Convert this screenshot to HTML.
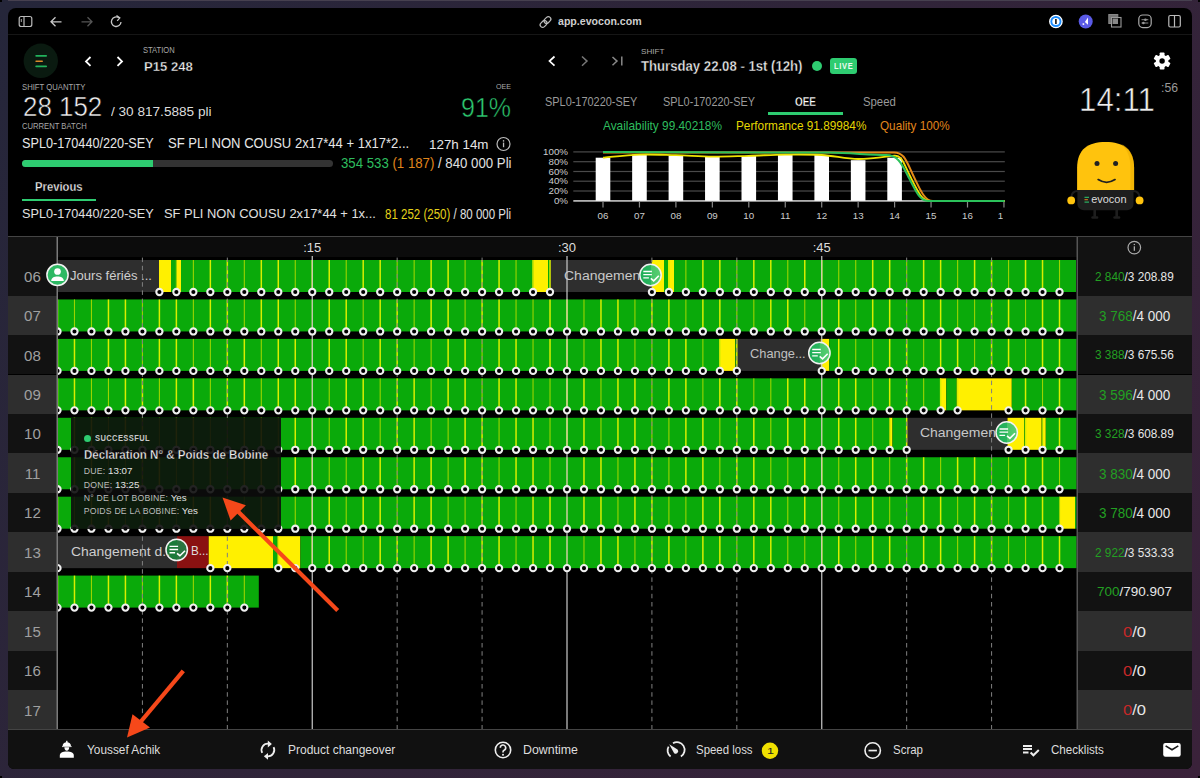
<!DOCTYPE html>
<html><head><meta charset="utf-8">
<style>
html,body{margin:0;padding:0;width:1200px;height:778px;overflow:hidden;background:#2a2a3c;font-family:"Liberation Sans", sans-serif;}
#frame{position:absolute;left:0;top:0;width:1200px;height:778px;background:linear-gradient(126deg,#25263a 0%,#302439 50%,#3a223a 100%);}
#win{position:absolute;left:8px;top:8px;width:1184px;height:761.3px;background:#000;border-radius:8px 8px 6px 6px;overflow:hidden;}
.t{position:absolute;white-space:nowrap;line-height:1;transform-origin:0 0;}
.abs{position:absolute;}
</style></head><body>
<div id="frame"></div>
<div id="win"></div>
<!-- toolbar line -->
<div class="abs" style="left:8px;top:34px;width:1184px;height:1px;background:#161616"></div>
<!-- progress bar -->
<div class="abs" style="left:21.5px;top:159.7px;width:311.3px;height:7px;border-radius:3.5px;background:#333"></div>
<div class="abs" style="left:21.5px;top:159.7px;width:131.9px;height:7px;border-radius:3.5px 0 0 3.5px;background:#2ecc71"></div>
<div class="abs" style="left:21.5px;top:198.7px;width:74.5px;height:2px;background:#2ecc71"></div>
<div class="abs" style="left:768px;top:112.3px;width:75px;height:2.5px;background:#2ecc71"></div>
<!-- LIVE badge -->
<div class="abs" style="left:830.4px;top:58.2px;width:27px;height:16px;border-radius:3px;background:#2ecc71"></div>
<div class="abs" style="left:812px;top:61.2px;width:10px;height:10px;border-radius:50%;background:#2ecc71"></div>
<!-- timeline frame -->
<div class="abs" style="left:8px;top:236px;width:1184px;height:1.3px;background:#444"></div>
<div id="labels"></div>
<div class="abs" style="left:8px;top:728.5px;width:1184px;height:40.8px;background:#111;border-top:1px solid #444;border-radius:0 0 6px 6px;box-sizing:border-box"></div>
<div class="abs" style="left:8px;top:0;width:1184px;height:1px;background:#46404f"></div>
<div class="abs" style="left:0;top:0;width:2px;height:2px;background:#000"></div><div class="abs" style="left:1198px;top:0;width:2px;height:2px;background:#000"></div><div class="abs" style="left:0;top:776px;width:2px;height:2px;background:#000"></div><div class="abs" style="left:1198px;top:776px;width:2px;height:2px;background:#000"></div>
<div class="abs" style="left:8px;top:237.3px;width:49px;height:58.3px;background:#121212"></div>
<div class="abs" style="left:1077px;top:237.3px;width:115px;height:58.3px;background:#121212"></div>
<div class="abs" style="left:8px;top:295.60px;width:49px;height:39.45px;background:#2e2e2e"></div>
<div class="abs" style="left:1077px;top:295.60px;width:115px;height:39.45px;background:#2e2e2e"></div>
<div class="abs" style="left:8px;top:335.05px;width:49px;height:39.45px;background:#121212"></div>
<div class="abs" style="left:1077px;top:335.05px;width:115px;height:39.45px;background:#121212"></div>
<div class="abs" style="left:8px;top:374.50px;width:49px;height:39.45px;background:#2e2e2e"></div>
<div class="abs" style="left:1077px;top:374.50px;width:115px;height:39.45px;background:#2e2e2e"></div>
<div class="abs" style="left:8px;top:413.95px;width:49px;height:39.45px;background:#121212"></div>
<div class="abs" style="left:1077px;top:413.95px;width:115px;height:39.45px;background:#121212"></div>
<div class="abs" style="left:8px;top:453.40px;width:49px;height:39.45px;background:#2e2e2e"></div>
<div class="abs" style="left:1077px;top:453.40px;width:115px;height:39.45px;background:#2e2e2e"></div>
<div class="abs" style="left:8px;top:492.85px;width:49px;height:39.45px;background:#121212"></div>
<div class="abs" style="left:1077px;top:492.85px;width:115px;height:39.45px;background:#121212"></div>
<div class="abs" style="left:8px;top:532.30px;width:49px;height:39.45px;background:#2e2e2e"></div>
<div class="abs" style="left:1077px;top:532.30px;width:115px;height:39.45px;background:#2e2e2e"></div>
<div class="abs" style="left:8px;top:571.75px;width:49px;height:39.45px;background:#121212"></div>
<div class="abs" style="left:1077px;top:571.75px;width:115px;height:39.45px;background:#121212"></div>
<div class="abs" style="left:8px;top:611.20px;width:49px;height:39.45px;background:#2e2e2e"></div>
<div class="abs" style="left:1077px;top:611.20px;width:115px;height:39.45px;background:#2e2e2e"></div>
<div class="abs" style="left:8px;top:650.65px;width:49px;height:39.45px;background:#121212"></div>
<div class="abs" style="left:1077px;top:650.65px;width:115px;height:39.45px;background:#121212"></div>
<div class="abs" style="left:8px;top:690.10px;width:49px;height:38.90px;background:#2e2e2e"></div>
<div class="abs" style="left:1077px;top:690.10px;width:115px;height:38.90px;background:#2e2e2e"></div>
<svg class="abs" style="left:0;top:0" width="1200" height="778" viewBox="0 0 1200 778">
<rect x="57" y="237" width="1020" height="20" fill="#0c0c0c"/>
<clipPath id="tlclip"><rect x="57.6" y="236" width="1019" height="493"/></clipPath><g clip-path="url(#tlclip)">
<rect x="57" y="260.0" width="102.00" height="32" fill="#2e2e2e"/>
<rect x="159" y="260.0" width="12.00" height="32" fill="#fff000"/>
<rect x="171" y="260.0" width="5.50" height="32" fill="#0aaa0a"/>
<rect x="176.5" y="260.0" width="4.50" height="32" fill="#fff000"/>
<rect x="181" y="260.0" width="352.30" height="32" fill="#0aaa0a"/>
<rect x="533.3" y="260.0" width="14.70" height="32" fill="#fff000"/>
<rect x="548" y="260.0" width="2.00" height="32" fill="#0aaa0a"/>
<rect x="550" y="260.0" width="101.70" height="32" fill="#2e2e2e"/>
<rect x="651.7" y="260.0" width="12.30" height="32" fill="#fff000"/>
<rect x="664" y="260.0" width="4.00" height="32" fill="#0aaa0a"/>
<rect x="668" y="260.0" width="6.00" height="32" fill="#fff000"/>
<rect x="674" y="260.0" width="402.00" height="32" fill="#0aaa0a"/>
<rect x="175.83" y="260.0" width="1.1" height="32" fill="#9ad400"/>
<rect x="192.82" y="260.0" width="1.1" height="32" fill="#9ad400"/>
<rect x="209.60" y="260.0" width="1.5" height="32" fill="#d8ee00"/>
<rect x="226.58" y="260.0" width="1.5" height="32" fill="#d8ee00"/>
<rect x="243.77" y="260.0" width="1.1" height="32" fill="#9ad400"/>
<rect x="260.55" y="260.0" width="1.5" height="32" fill="#d8ee00"/>
<rect x="277.53" y="260.0" width="1.5" height="32" fill="#d8ee00"/>
<rect x="294.72" y="260.0" width="1.1" height="32" fill="#9ad400"/>
<rect x="311.50" y="260.0" width="1.5" height="32" fill="#d8ee00"/>
<rect x="328.48" y="260.0" width="1.5" height="32" fill="#d8ee00"/>
<rect x="345.67" y="260.0" width="1.1" height="32" fill="#9ad400"/>
<rect x="362.45" y="260.0" width="1.5" height="32" fill="#d8ee00"/>
<rect x="379.43" y="260.0" width="1.5" height="32" fill="#d8ee00"/>
<rect x="396.62" y="260.0" width="1.1" height="32" fill="#9ad400"/>
<rect x="413.60" y="260.0" width="1.1" height="32" fill="#9ad400"/>
<rect x="430.38" y="260.0" width="1.5" height="32" fill="#d8ee00"/>
<rect x="447.37" y="260.0" width="1.5" height="32" fill="#d8ee00"/>
<rect x="464.55" y="260.0" width="1.1" height="32" fill="#9ad400"/>
<rect x="481.33" y="260.0" width="1.5" height="32" fill="#d8ee00"/>
<rect x="498.32" y="260.0" width="1.5" height="32" fill="#d8ee00"/>
<rect x="515.50" y="260.0" width="1.1" height="32" fill="#9ad400"/>
<rect x="532.28" y="260.0" width="1.5" height="32" fill="#d8ee00"/>
<rect x="549.27" y="260.0" width="1.5" height="32" fill="#d8ee00"/>
<rect x="668.15" y="260.0" width="1.5" height="32" fill="#d8ee00"/>
<rect x="685.33" y="260.0" width="1.1" height="32" fill="#9ad400"/>
<rect x="702.12" y="260.0" width="1.5" height="32" fill="#d8ee00"/>
<rect x="719.10" y="260.0" width="1.5" height="32" fill="#d8ee00"/>
<rect x="736.28" y="260.0" width="1.1" height="32" fill="#9ad400"/>
<rect x="753.07" y="260.0" width="1.5" height="32" fill="#d8ee00"/>
<rect x="770.05" y="260.0" width="1.5" height="32" fill="#d8ee00"/>
<rect x="787.23" y="260.0" width="1.1" height="32" fill="#9ad400"/>
<rect x="804.02" y="260.0" width="1.5" height="32" fill="#d8ee00"/>
<rect x="821.00" y="260.0" width="1.5" height="32" fill="#d8ee00"/>
<rect x="838.18" y="260.0" width="1.1" height="32" fill="#9ad400"/>
<rect x="855.17" y="260.0" width="1.1" height="32" fill="#9ad400"/>
<rect x="871.95" y="260.0" width="1.5" height="32" fill="#d8ee00"/>
<rect x="888.93" y="260.0" width="1.5" height="32" fill="#d8ee00"/>
<rect x="906.12" y="260.0" width="1.1" height="32" fill="#9ad400"/>
<rect x="922.90" y="260.0" width="1.5" height="32" fill="#d8ee00"/>
<rect x="939.88" y="260.0" width="1.5" height="32" fill="#d8ee00"/>
<rect x="957.07" y="260.0" width="1.1" height="32" fill="#9ad400"/>
<rect x="973.85" y="260.0" width="1.5" height="32" fill="#d8ee00"/>
<rect x="990.83" y="260.0" width="1.5" height="32" fill="#d8ee00"/>
<rect x="1008.02" y="260.0" width="1.1" height="32" fill="#9ad400"/>
<rect x="1024.80" y="260.0" width="1.5" height="32" fill="#d8ee00"/>
<rect x="1041.78" y="260.0" width="1.5" height="32" fill="#d8ee00"/>
<rect x="1058.97" y="260.0" width="1.1" height="32" fill="#9ad400"/>
<rect x="57" y="299.45" width="1020.00" height="32" fill="#0aaa0a"/>
<rect x="56.75" y="299.45" width="1.5" height="32" fill="#d8ee00"/>
<rect x="73.93" y="299.45" width="1.1" height="32" fill="#9ad400"/>
<rect x="90.92" y="299.45" width="1.1" height="32" fill="#9ad400"/>
<rect x="107.70" y="299.45" width="1.5" height="32" fill="#d8ee00"/>
<rect x="124.68" y="299.45" width="1.5" height="32" fill="#d8ee00"/>
<rect x="141.87" y="299.45" width="1.1" height="32" fill="#9ad400"/>
<rect x="158.65" y="299.45" width="1.5" height="32" fill="#d8ee00"/>
<rect x="175.63" y="299.45" width="1.5" height="32" fill="#d8ee00"/>
<rect x="192.82" y="299.45" width="1.1" height="32" fill="#9ad400"/>
<rect x="209.60" y="299.45" width="1.5" height="32" fill="#d8ee00"/>
<rect x="226.58" y="299.45" width="1.5" height="32" fill="#d8ee00"/>
<rect x="243.77" y="299.45" width="1.1" height="32" fill="#9ad400"/>
<rect x="260.55" y="299.45" width="1.5" height="32" fill="#d8ee00"/>
<rect x="277.53" y="299.45" width="1.5" height="32" fill="#d8ee00"/>
<rect x="294.72" y="299.45" width="1.1" height="32" fill="#9ad400"/>
<rect x="311.70" y="299.45" width="1.1" height="32" fill="#9ad400"/>
<rect x="328.48" y="299.45" width="1.5" height="32" fill="#d8ee00"/>
<rect x="345.47" y="299.45" width="1.5" height="32" fill="#d8ee00"/>
<rect x="362.65" y="299.45" width="1.1" height="32" fill="#9ad400"/>
<rect x="379.43" y="299.45" width="1.5" height="32" fill="#d8ee00"/>
<rect x="396.42" y="299.45" width="1.5" height="32" fill="#d8ee00"/>
<rect x="413.60" y="299.45" width="1.1" height="32" fill="#9ad400"/>
<rect x="430.38" y="299.45" width="1.5" height="32" fill="#d8ee00"/>
<rect x="447.37" y="299.45" width="1.5" height="32" fill="#d8ee00"/>
<rect x="464.55" y="299.45" width="1.1" height="32" fill="#9ad400"/>
<rect x="481.33" y="299.45" width="1.5" height="32" fill="#d8ee00"/>
<rect x="498.32" y="299.45" width="1.5" height="32" fill="#d8ee00"/>
<rect x="515.50" y="299.45" width="1.1" height="32" fill="#9ad400"/>
<rect x="532.48" y="299.45" width="1.1" height="32" fill="#9ad400"/>
<rect x="549.27" y="299.45" width="1.5" height="32" fill="#d8ee00"/>
<rect x="566.25" y="299.45" width="1.5" height="32" fill="#d8ee00"/>
<rect x="583.43" y="299.45" width="1.1" height="32" fill="#9ad400"/>
<rect x="600.22" y="299.45" width="1.5" height="32" fill="#d8ee00"/>
<rect x="617.20" y="299.45" width="1.5" height="32" fill="#d8ee00"/>
<rect x="634.38" y="299.45" width="1.1" height="32" fill="#9ad400"/>
<rect x="651.17" y="299.45" width="1.5" height="32" fill="#d8ee00"/>
<rect x="668.15" y="299.45" width="1.5" height="32" fill="#d8ee00"/>
<rect x="685.33" y="299.45" width="1.1" height="32" fill="#9ad400"/>
<rect x="702.12" y="299.45" width="1.5" height="32" fill="#d8ee00"/>
<rect x="719.10" y="299.45" width="1.5" height="32" fill="#d8ee00"/>
<rect x="736.28" y="299.45" width="1.1" height="32" fill="#9ad400"/>
<rect x="753.27" y="299.45" width="1.1" height="32" fill="#9ad400"/>
<rect x="770.05" y="299.45" width="1.5" height="32" fill="#d8ee00"/>
<rect x="787.03" y="299.45" width="1.5" height="32" fill="#d8ee00"/>
<rect x="804.22" y="299.45" width="1.1" height="32" fill="#9ad400"/>
<rect x="821.00" y="299.45" width="1.5" height="32" fill="#d8ee00"/>
<rect x="837.98" y="299.45" width="1.5" height="32" fill="#d8ee00"/>
<rect x="855.17" y="299.45" width="1.1" height="32" fill="#9ad400"/>
<rect x="871.95" y="299.45" width="1.5" height="32" fill="#d8ee00"/>
<rect x="888.93" y="299.45" width="1.5" height="32" fill="#d8ee00"/>
<rect x="906.12" y="299.45" width="1.1" height="32" fill="#9ad400"/>
<rect x="922.90" y="299.45" width="1.5" height="32" fill="#d8ee00"/>
<rect x="939.88" y="299.45" width="1.5" height="32" fill="#d8ee00"/>
<rect x="957.07" y="299.45" width="1.1" height="32" fill="#9ad400"/>
<rect x="974.05" y="299.45" width="1.1" height="32" fill="#9ad400"/>
<rect x="990.83" y="299.45" width="1.5" height="32" fill="#d8ee00"/>
<rect x="1007.82" y="299.45" width="1.5" height="32" fill="#d8ee00"/>
<rect x="1025.00" y="299.45" width="1.1" height="32" fill="#9ad400"/>
<rect x="1041.78" y="299.45" width="1.5" height="32" fill="#d8ee00"/>
<rect x="1058.77" y="299.45" width="1.5" height="32" fill="#d8ee00"/>
<rect x="57" y="338.9" width="663.00" height="32" fill="#0aaa0a"/>
<rect x="720" y="338.9" width="15.30" height="32" fill="#fff000"/>
<rect x="735.3" y="338.9" width="2.00" height="32" fill="#0aaa0a"/>
<rect x="737.3" y="338.9" width="83.40" height="32" fill="#2e2e2e"/>
<rect x="820.7" y="338.9" width="8.60" height="32" fill="#fff000"/>
<rect x="829.3" y="338.9" width="247.70" height="32" fill="#0aaa0a"/>
<rect x="56.75" y="338.9" width="1.5" height="32" fill="#d8ee00"/>
<rect x="73.73" y="338.9" width="1.5" height="32" fill="#d8ee00"/>
<rect x="90.92" y="338.9" width="1.1" height="32" fill="#9ad400"/>
<rect x="107.70" y="338.9" width="1.5" height="32" fill="#d8ee00"/>
<rect x="124.68" y="338.9" width="1.5" height="32" fill="#d8ee00"/>
<rect x="141.87" y="338.9" width="1.1" height="32" fill="#9ad400"/>
<rect x="158.65" y="338.9" width="1.5" height="32" fill="#d8ee00"/>
<rect x="175.63" y="338.9" width="1.5" height="32" fill="#d8ee00"/>
<rect x="192.82" y="338.9" width="1.1" height="32" fill="#9ad400"/>
<rect x="209.80" y="338.9" width="1.1" height="32" fill="#9ad400"/>
<rect x="226.58" y="338.9" width="1.5" height="32" fill="#d8ee00"/>
<rect x="243.57" y="338.9" width="1.5" height="32" fill="#d8ee00"/>
<rect x="260.75" y="338.9" width="1.1" height="32" fill="#9ad400"/>
<rect x="277.53" y="338.9" width="1.5" height="32" fill="#d8ee00"/>
<rect x="294.52" y="338.9" width="1.5" height="32" fill="#d8ee00"/>
<rect x="311.70" y="338.9" width="1.1" height="32" fill="#9ad400"/>
<rect x="328.48" y="338.9" width="1.5" height="32" fill="#d8ee00"/>
<rect x="345.47" y="338.9" width="1.5" height="32" fill="#d8ee00"/>
<rect x="362.65" y="338.9" width="1.1" height="32" fill="#9ad400"/>
<rect x="379.43" y="338.9" width="1.5" height="32" fill="#d8ee00"/>
<rect x="396.42" y="338.9" width="1.5" height="32" fill="#d8ee00"/>
<rect x="413.60" y="338.9" width="1.1" height="32" fill="#9ad400"/>
<rect x="430.58" y="338.9" width="1.1" height="32" fill="#9ad400"/>
<rect x="447.37" y="338.9" width="1.5" height="32" fill="#d8ee00"/>
<rect x="464.35" y="338.9" width="1.5" height="32" fill="#d8ee00"/>
<rect x="481.53" y="338.9" width="1.1" height="32" fill="#9ad400"/>
<rect x="498.32" y="338.9" width="1.5" height="32" fill="#d8ee00"/>
<rect x="515.30" y="338.9" width="1.5" height="32" fill="#d8ee00"/>
<rect x="532.48" y="338.9" width="1.1" height="32" fill="#9ad400"/>
<rect x="549.27" y="338.9" width="1.5" height="32" fill="#d8ee00"/>
<rect x="566.25" y="338.9" width="1.5" height="32" fill="#d8ee00"/>
<rect x="583.43" y="338.9" width="1.1" height="32" fill="#9ad400"/>
<rect x="600.22" y="338.9" width="1.5" height="32" fill="#d8ee00"/>
<rect x="617.20" y="338.9" width="1.5" height="32" fill="#d8ee00"/>
<rect x="634.38" y="338.9" width="1.1" height="32" fill="#9ad400"/>
<rect x="651.37" y="338.9" width="1.1" height="32" fill="#9ad400"/>
<rect x="668.15" y="338.9" width="1.5" height="32" fill="#d8ee00"/>
<rect x="685.13" y="338.9" width="1.5" height="32" fill="#d8ee00"/>
<rect x="702.32" y="338.9" width="1.1" height="32" fill="#9ad400"/>
<rect x="719.10" y="338.9" width="1.5" height="32" fill="#d8ee00"/>
<rect x="736.08" y="338.9" width="1.5" height="32" fill="#d8ee00"/>
<rect x="837.98" y="338.9" width="1.5" height="32" fill="#d8ee00"/>
<rect x="855.17" y="338.9" width="1.1" height="32" fill="#9ad400"/>
<rect x="872.15" y="338.9" width="1.1" height="32" fill="#9ad400"/>
<rect x="888.93" y="338.9" width="1.5" height="32" fill="#d8ee00"/>
<rect x="905.92" y="338.9" width="1.5" height="32" fill="#d8ee00"/>
<rect x="923.10" y="338.9" width="1.1" height="32" fill="#9ad400"/>
<rect x="939.88" y="338.9" width="1.5" height="32" fill="#d8ee00"/>
<rect x="956.87" y="338.9" width="1.5" height="32" fill="#d8ee00"/>
<rect x="974.05" y="338.9" width="1.1" height="32" fill="#9ad400"/>
<rect x="990.83" y="338.9" width="1.5" height="32" fill="#d8ee00"/>
<rect x="1007.82" y="338.9" width="1.5" height="32" fill="#d8ee00"/>
<rect x="1025.00" y="338.9" width="1.1" height="32" fill="#9ad400"/>
<rect x="1041.78" y="338.9" width="1.5" height="32" fill="#d8ee00"/>
<rect x="1058.77" y="338.9" width="1.5" height="32" fill="#d8ee00"/>
<rect x="57" y="378.35" width="883.00" height="32" fill="#0aaa0a"/>
<rect x="940" y="378.35" width="6.30" height="32" fill="#fff000"/>
<rect x="946.3" y="378.35" width="10.50" height="32" fill="#0aaa0a"/>
<rect x="956.8" y="378.35" width="55.00" height="32" fill="#fff000"/>
<rect x="1011.8" y="378.35" width="65.20" height="32" fill="#0aaa0a"/>
<rect x="56.75" y="378.35" width="1.5" height="32" fill="#d8ee00"/>
<rect x="73.73" y="378.35" width="1.5" height="32" fill="#d8ee00"/>
<rect x="90.92" y="378.35" width="1.1" height="32" fill="#9ad400"/>
<rect x="107.90" y="378.35" width="1.1" height="32" fill="#9ad400"/>
<rect x="124.68" y="378.35" width="1.5" height="32" fill="#d8ee00"/>
<rect x="141.67" y="378.35" width="1.5" height="32" fill="#d8ee00"/>
<rect x="158.85" y="378.35" width="1.1" height="32" fill="#9ad400"/>
<rect x="175.63" y="378.35" width="1.5" height="32" fill="#d8ee00"/>
<rect x="192.62" y="378.35" width="1.5" height="32" fill="#d8ee00"/>
<rect x="209.80" y="378.35" width="1.1" height="32" fill="#9ad400"/>
<rect x="226.58" y="378.35" width="1.5" height="32" fill="#d8ee00"/>
<rect x="243.57" y="378.35" width="1.5" height="32" fill="#d8ee00"/>
<rect x="260.75" y="378.35" width="1.1" height="32" fill="#9ad400"/>
<rect x="277.53" y="378.35" width="1.5" height="32" fill="#d8ee00"/>
<rect x="294.52" y="378.35" width="1.5" height="32" fill="#d8ee00"/>
<rect x="311.70" y="378.35" width="1.1" height="32" fill="#9ad400"/>
<rect x="328.68" y="378.35" width="1.1" height="32" fill="#9ad400"/>
<rect x="345.47" y="378.35" width="1.5" height="32" fill="#d8ee00"/>
<rect x="362.45" y="378.35" width="1.5" height="32" fill="#d8ee00"/>
<rect x="379.63" y="378.35" width="1.1" height="32" fill="#9ad400"/>
<rect x="396.42" y="378.35" width="1.5" height="32" fill="#d8ee00"/>
<rect x="413.40" y="378.35" width="1.5" height="32" fill="#d8ee00"/>
<rect x="430.58" y="378.35" width="1.1" height="32" fill="#9ad400"/>
<rect x="447.37" y="378.35" width="1.5" height="32" fill="#d8ee00"/>
<rect x="464.35" y="378.35" width="1.5" height="32" fill="#d8ee00"/>
<rect x="481.53" y="378.35" width="1.1" height="32" fill="#9ad400"/>
<rect x="498.32" y="378.35" width="1.5" height="32" fill="#d8ee00"/>
<rect x="515.30" y="378.35" width="1.5" height="32" fill="#d8ee00"/>
<rect x="532.48" y="378.35" width="1.1" height="32" fill="#9ad400"/>
<rect x="549.47" y="378.35" width="1.1" height="32" fill="#9ad400"/>
<rect x="566.25" y="378.35" width="1.5" height="32" fill="#d8ee00"/>
<rect x="583.23" y="378.35" width="1.5" height="32" fill="#d8ee00"/>
<rect x="600.42" y="378.35" width="1.1" height="32" fill="#9ad400"/>
<rect x="617.20" y="378.35" width="1.5" height="32" fill="#d8ee00"/>
<rect x="634.18" y="378.35" width="1.5" height="32" fill="#d8ee00"/>
<rect x="651.37" y="378.35" width="1.1" height="32" fill="#9ad400"/>
<rect x="668.15" y="378.35" width="1.5" height="32" fill="#d8ee00"/>
<rect x="685.13" y="378.35" width="1.5" height="32" fill="#d8ee00"/>
<rect x="702.32" y="378.35" width="1.1" height="32" fill="#9ad400"/>
<rect x="719.10" y="378.35" width="1.5" height="32" fill="#d8ee00"/>
<rect x="736.08" y="378.35" width="1.5" height="32" fill="#d8ee00"/>
<rect x="753.27" y="378.35" width="1.1" height="32" fill="#9ad400"/>
<rect x="770.25" y="378.35" width="1.1" height="32" fill="#9ad400"/>
<rect x="787.03" y="378.35" width="1.5" height="32" fill="#d8ee00"/>
<rect x="804.02" y="378.35" width="1.5" height="32" fill="#d8ee00"/>
<rect x="821.20" y="378.35" width="1.1" height="32" fill="#9ad400"/>
<rect x="837.98" y="378.35" width="1.5" height="32" fill="#d8ee00"/>
<rect x="854.97" y="378.35" width="1.5" height="32" fill="#d8ee00"/>
<rect x="872.15" y="378.35" width="1.1" height="32" fill="#9ad400"/>
<rect x="888.93" y="378.35" width="1.5" height="32" fill="#d8ee00"/>
<rect x="905.92" y="378.35" width="1.5" height="32" fill="#d8ee00"/>
<rect x="923.10" y="378.35" width="1.1" height="32" fill="#9ad400"/>
<rect x="939.88" y="378.35" width="1.5" height="32" fill="#d8ee00"/>
<rect x="956.87" y="378.35" width="1.5" height="32" fill="#d8ee00"/>
<rect x="1024.80" y="378.35" width="1.5" height="32" fill="#d8ee00"/>
<rect x="1041.98" y="378.35" width="1.1" height="32" fill="#9ad400"/>
<rect x="1058.77" y="378.35" width="1.5" height="32" fill="#d8ee00"/>
<rect x="57" y="417.8" width="832.20" height="32" fill="#0aaa0a"/>
<rect x="889.2" y="417.8" width="3.30" height="32" fill="#fff000"/>
<rect x="892.5" y="417.8" width="14.50" height="32" fill="#0aaa0a"/>
<rect x="907" y="417.8" width="100.50" height="32" fill="#2e2e2e"/>
<rect x="1007.5" y="417.8" width="16.70" height="32" fill="#fff000"/>
<rect x="1024.2" y="417.8" width="1.80" height="32" fill="#0aaa0a"/>
<rect x="1026" y="417.8" width="15.70" height="32" fill="#fff000"/>
<rect x="1041.7" y="417.8" width="1.30" height="32" fill="#0aaa0a"/>
<rect x="1043" y="417.8" width="2.80" height="32" fill="#fff000"/>
<rect x="1045.8" y="417.8" width="31.20" height="32" fill="#0aaa0a"/>
<rect x="56.95" y="417.8" width="1.1" height="32" fill="#9ad400"/>
<rect x="73.73" y="417.8" width="1.5" height="32" fill="#d8ee00"/>
<rect x="90.72" y="417.8" width="1.5" height="32" fill="#d8ee00"/>
<rect x="107.90" y="417.8" width="1.1" height="32" fill="#9ad400"/>
<rect x="124.68" y="417.8" width="1.5" height="32" fill="#d8ee00"/>
<rect x="141.67" y="417.8" width="1.5" height="32" fill="#d8ee00"/>
<rect x="158.85" y="417.8" width="1.1" height="32" fill="#9ad400"/>
<rect x="175.63" y="417.8" width="1.5" height="32" fill="#d8ee00"/>
<rect x="192.62" y="417.8" width="1.5" height="32" fill="#d8ee00"/>
<rect x="209.80" y="417.8" width="1.1" height="32" fill="#9ad400"/>
<rect x="226.78" y="417.8" width="1.1" height="32" fill="#9ad400"/>
<rect x="243.57" y="417.8" width="1.5" height="32" fill="#d8ee00"/>
<rect x="260.55" y="417.8" width="1.5" height="32" fill="#d8ee00"/>
<rect x="277.73" y="417.8" width="1.1" height="32" fill="#9ad400"/>
<rect x="294.52" y="417.8" width="1.5" height="32" fill="#d8ee00"/>
<rect x="311.50" y="417.8" width="1.5" height="32" fill="#d8ee00"/>
<rect x="328.68" y="417.8" width="1.1" height="32" fill="#9ad400"/>
<rect x="345.47" y="417.8" width="1.5" height="32" fill="#d8ee00"/>
<rect x="362.45" y="417.8" width="1.5" height="32" fill="#d8ee00"/>
<rect x="379.63" y="417.8" width="1.1" height="32" fill="#9ad400"/>
<rect x="396.42" y="417.8" width="1.5" height="32" fill="#d8ee00"/>
<rect x="413.40" y="417.8" width="1.5" height="32" fill="#d8ee00"/>
<rect x="430.58" y="417.8" width="1.1" height="32" fill="#9ad400"/>
<rect x="447.57" y="417.8" width="1.1" height="32" fill="#9ad400"/>
<rect x="464.35" y="417.8" width="1.5" height="32" fill="#d8ee00"/>
<rect x="481.33" y="417.8" width="1.5" height="32" fill="#d8ee00"/>
<rect x="498.52" y="417.8" width="1.1" height="32" fill="#9ad400"/>
<rect x="515.30" y="417.8" width="1.5" height="32" fill="#d8ee00"/>
<rect x="532.28" y="417.8" width="1.5" height="32" fill="#d8ee00"/>
<rect x="549.47" y="417.8" width="1.1" height="32" fill="#9ad400"/>
<rect x="566.25" y="417.8" width="1.5" height="32" fill="#d8ee00"/>
<rect x="583.23" y="417.8" width="1.5" height="32" fill="#d8ee00"/>
<rect x="600.42" y="417.8" width="1.1" height="32" fill="#9ad400"/>
<rect x="617.20" y="417.8" width="1.5" height="32" fill="#d8ee00"/>
<rect x="634.18" y="417.8" width="1.5" height="32" fill="#d8ee00"/>
<rect x="651.37" y="417.8" width="1.1" height="32" fill="#9ad400"/>
<rect x="668.35" y="417.8" width="1.1" height="32" fill="#9ad400"/>
<rect x="685.13" y="417.8" width="1.5" height="32" fill="#d8ee00"/>
<rect x="702.12" y="417.8" width="1.5" height="32" fill="#d8ee00"/>
<rect x="719.30" y="417.8" width="1.1" height="32" fill="#9ad400"/>
<rect x="736.08" y="417.8" width="1.5" height="32" fill="#d8ee00"/>
<rect x="753.07" y="417.8" width="1.5" height="32" fill="#d8ee00"/>
<rect x="770.25" y="417.8" width="1.1" height="32" fill="#9ad400"/>
<rect x="787.03" y="417.8" width="1.5" height="32" fill="#d8ee00"/>
<rect x="804.02" y="417.8" width="1.5" height="32" fill="#d8ee00"/>
<rect x="821.20" y="417.8" width="1.1" height="32" fill="#9ad400"/>
<rect x="837.98" y="417.8" width="1.5" height="32" fill="#d8ee00"/>
<rect x="854.97" y="417.8" width="1.5" height="32" fill="#d8ee00"/>
<rect x="872.15" y="417.8" width="1.1" height="32" fill="#9ad400"/>
<rect x="889.13" y="417.8" width="1.1" height="32" fill="#9ad400"/>
<rect x="905.92" y="417.8" width="1.5" height="32" fill="#d8ee00"/>
<rect x="1024.80" y="417.8" width="1.5" height="32" fill="#d8ee00"/>
<rect x="1041.98" y="417.8" width="1.1" height="32" fill="#9ad400"/>
<rect x="1058.77" y="417.8" width="1.5" height="32" fill="#d8ee00"/>
<rect x="57" y="457.25" width="1020.00" height="32" fill="#0aaa0a"/>
<rect x="56.95" y="457.25" width="1.1" height="32" fill="#9ad400"/>
<rect x="73.73" y="457.25" width="1.5" height="32" fill="#d8ee00"/>
<rect x="90.72" y="457.25" width="1.5" height="32" fill="#d8ee00"/>
<rect x="107.90" y="457.25" width="1.1" height="32" fill="#9ad400"/>
<rect x="124.88" y="457.25" width="1.1" height="32" fill="#9ad400"/>
<rect x="141.67" y="457.25" width="1.5" height="32" fill="#d8ee00"/>
<rect x="158.65" y="457.25" width="1.5" height="32" fill="#d8ee00"/>
<rect x="175.83" y="457.25" width="1.1" height="32" fill="#9ad400"/>
<rect x="192.62" y="457.25" width="1.5" height="32" fill="#d8ee00"/>
<rect x="209.60" y="457.25" width="1.5" height="32" fill="#d8ee00"/>
<rect x="226.78" y="457.25" width="1.1" height="32" fill="#9ad400"/>
<rect x="243.57" y="457.25" width="1.5" height="32" fill="#d8ee00"/>
<rect x="260.55" y="457.25" width="1.5" height="32" fill="#d8ee00"/>
<rect x="277.73" y="457.25" width="1.1" height="32" fill="#9ad400"/>
<rect x="294.52" y="457.25" width="1.5" height="32" fill="#d8ee00"/>
<rect x="311.50" y="457.25" width="1.5" height="32" fill="#d8ee00"/>
<rect x="328.68" y="457.25" width="1.1" height="32" fill="#9ad400"/>
<rect x="345.67" y="457.25" width="1.1" height="32" fill="#9ad400"/>
<rect x="362.45" y="457.25" width="1.5" height="32" fill="#d8ee00"/>
<rect x="379.43" y="457.25" width="1.5" height="32" fill="#d8ee00"/>
<rect x="396.62" y="457.25" width="1.1" height="32" fill="#9ad400"/>
<rect x="413.40" y="457.25" width="1.5" height="32" fill="#d8ee00"/>
<rect x="430.38" y="457.25" width="1.5" height="32" fill="#d8ee00"/>
<rect x="447.57" y="457.25" width="1.1" height="32" fill="#9ad400"/>
<rect x="464.35" y="457.25" width="1.5" height="32" fill="#d8ee00"/>
<rect x="481.33" y="457.25" width="1.5" height="32" fill="#d8ee00"/>
<rect x="498.52" y="457.25" width="1.1" height="32" fill="#9ad400"/>
<rect x="515.30" y="457.25" width="1.5" height="32" fill="#d8ee00"/>
<rect x="532.28" y="457.25" width="1.5" height="32" fill="#d8ee00"/>
<rect x="549.47" y="457.25" width="1.1" height="32" fill="#9ad400"/>
<rect x="566.45" y="457.25" width="1.1" height="32" fill="#9ad400"/>
<rect x="583.23" y="457.25" width="1.5" height="32" fill="#d8ee00"/>
<rect x="600.22" y="457.25" width="1.5" height="32" fill="#d8ee00"/>
<rect x="617.40" y="457.25" width="1.1" height="32" fill="#9ad400"/>
<rect x="634.18" y="457.25" width="1.5" height="32" fill="#d8ee00"/>
<rect x="651.17" y="457.25" width="1.5" height="32" fill="#d8ee00"/>
<rect x="668.35" y="457.25" width="1.1" height="32" fill="#9ad400"/>
<rect x="685.13" y="457.25" width="1.5" height="32" fill="#d8ee00"/>
<rect x="702.12" y="457.25" width="1.5" height="32" fill="#d8ee00"/>
<rect x="719.30" y="457.25" width="1.1" height="32" fill="#9ad400"/>
<rect x="736.08" y="457.25" width="1.5" height="32" fill="#d8ee00"/>
<rect x="753.07" y="457.25" width="1.5" height="32" fill="#d8ee00"/>
<rect x="770.25" y="457.25" width="1.1" height="32" fill="#9ad400"/>
<rect x="787.23" y="457.25" width="1.1" height="32" fill="#9ad400"/>
<rect x="804.02" y="457.25" width="1.5" height="32" fill="#d8ee00"/>
<rect x="821.00" y="457.25" width="1.5" height="32" fill="#d8ee00"/>
<rect x="838.18" y="457.25" width="1.1" height="32" fill="#9ad400"/>
<rect x="854.97" y="457.25" width="1.5" height="32" fill="#d8ee00"/>
<rect x="871.95" y="457.25" width="1.5" height="32" fill="#d8ee00"/>
<rect x="889.13" y="457.25" width="1.1" height="32" fill="#9ad400"/>
<rect x="905.92" y="457.25" width="1.5" height="32" fill="#d8ee00"/>
<rect x="922.90" y="457.25" width="1.5" height="32" fill="#d8ee00"/>
<rect x="940.08" y="457.25" width="1.1" height="32" fill="#9ad400"/>
<rect x="956.87" y="457.25" width="1.5" height="32" fill="#d8ee00"/>
<rect x="973.85" y="457.25" width="1.5" height="32" fill="#d8ee00"/>
<rect x="991.03" y="457.25" width="1.1" height="32" fill="#9ad400"/>
<rect x="1008.02" y="457.25" width="1.1" height="32" fill="#9ad400"/>
<rect x="1024.80" y="457.25" width="1.5" height="32" fill="#d8ee00"/>
<rect x="1041.78" y="457.25" width="1.5" height="32" fill="#d8ee00"/>
<rect x="1058.97" y="457.25" width="1.1" height="32" fill="#9ad400"/>
<rect x="57" y="496.70000000000005" width="1002.60" height="32" fill="#0aaa0a"/>
<rect x="1059.6" y="496.70000000000005" width="15.40" height="32" fill="#fff000"/>
<rect x="1075" y="496.70000000000005" width="2.00" height="32" fill="#0aaa0a"/>
<rect x="56.75" y="496.70000000000005" width="1.5" height="32" fill="#d8ee00"/>
<rect x="73.93" y="496.70000000000005" width="1.1" height="32" fill="#9ad400"/>
<rect x="90.72" y="496.70000000000005" width="1.5" height="32" fill="#d8ee00"/>
<rect x="107.70" y="496.70000000000005" width="1.5" height="32" fill="#d8ee00"/>
<rect x="124.88" y="496.70000000000005" width="1.1" height="32" fill="#9ad400"/>
<rect x="141.67" y="496.70000000000005" width="1.5" height="32" fill="#d8ee00"/>
<rect x="158.65" y="496.70000000000005" width="1.5" height="32" fill="#d8ee00"/>
<rect x="175.83" y="496.70000000000005" width="1.1" height="32" fill="#9ad400"/>
<rect x="192.62" y="496.70000000000005" width="1.5" height="32" fill="#d8ee00"/>
<rect x="209.60" y="496.70000000000005" width="1.5" height="32" fill="#d8ee00"/>
<rect x="226.78" y="496.70000000000005" width="1.1" height="32" fill="#9ad400"/>
<rect x="243.77" y="496.70000000000005" width="1.1" height="32" fill="#9ad400"/>
<rect x="260.55" y="496.70000000000005" width="1.5" height="32" fill="#d8ee00"/>
<rect x="277.53" y="496.70000000000005" width="1.5" height="32" fill="#d8ee00"/>
<rect x="294.72" y="496.70000000000005" width="1.1" height="32" fill="#9ad400"/>
<rect x="311.50" y="496.70000000000005" width="1.5" height="32" fill="#d8ee00"/>
<rect x="328.48" y="496.70000000000005" width="1.5" height="32" fill="#d8ee00"/>
<rect x="345.67" y="496.70000000000005" width="1.1" height="32" fill="#9ad400"/>
<rect x="362.45" y="496.70000000000005" width="1.5" height="32" fill="#d8ee00"/>
<rect x="379.43" y="496.70000000000005" width="1.5" height="32" fill="#d8ee00"/>
<rect x="396.62" y="496.70000000000005" width="1.1" height="32" fill="#9ad400"/>
<rect x="413.40" y="496.70000000000005" width="1.5" height="32" fill="#d8ee00"/>
<rect x="430.38" y="496.70000000000005" width="1.5" height="32" fill="#d8ee00"/>
<rect x="447.57" y="496.70000000000005" width="1.1" height="32" fill="#9ad400"/>
<rect x="464.55" y="496.70000000000005" width="1.1" height="32" fill="#9ad400"/>
<rect x="481.33" y="496.70000000000005" width="1.5" height="32" fill="#d8ee00"/>
<rect x="498.32" y="496.70000000000005" width="1.5" height="32" fill="#d8ee00"/>
<rect x="515.50" y="496.70000000000005" width="1.1" height="32" fill="#9ad400"/>
<rect x="532.28" y="496.70000000000005" width="1.5" height="32" fill="#d8ee00"/>
<rect x="549.27" y="496.70000000000005" width="1.5" height="32" fill="#d8ee00"/>
<rect x="566.45" y="496.70000000000005" width="1.1" height="32" fill="#9ad400"/>
<rect x="583.23" y="496.70000000000005" width="1.5" height="32" fill="#d8ee00"/>
<rect x="600.22" y="496.70000000000005" width="1.5" height="32" fill="#d8ee00"/>
<rect x="617.40" y="496.70000000000005" width="1.1" height="32" fill="#9ad400"/>
<rect x="634.18" y="496.70000000000005" width="1.5" height="32" fill="#d8ee00"/>
<rect x="651.17" y="496.70000000000005" width="1.5" height="32" fill="#d8ee00"/>
<rect x="668.35" y="496.70000000000005" width="1.1" height="32" fill="#9ad400"/>
<rect x="685.33" y="496.70000000000005" width="1.1" height="32" fill="#9ad400"/>
<rect x="702.12" y="496.70000000000005" width="1.5" height="32" fill="#d8ee00"/>
<rect x="719.10" y="496.70000000000005" width="1.5" height="32" fill="#d8ee00"/>
<rect x="736.28" y="496.70000000000005" width="1.1" height="32" fill="#9ad400"/>
<rect x="753.07" y="496.70000000000005" width="1.5" height="32" fill="#d8ee00"/>
<rect x="770.05" y="496.70000000000005" width="1.5" height="32" fill="#d8ee00"/>
<rect x="787.23" y="496.70000000000005" width="1.1" height="32" fill="#9ad400"/>
<rect x="804.02" y="496.70000000000005" width="1.5" height="32" fill="#d8ee00"/>
<rect x="821.00" y="496.70000000000005" width="1.5" height="32" fill="#d8ee00"/>
<rect x="838.18" y="496.70000000000005" width="1.1" height="32" fill="#9ad400"/>
<rect x="854.97" y="496.70000000000005" width="1.5" height="32" fill="#d8ee00"/>
<rect x="871.95" y="496.70000000000005" width="1.5" height="32" fill="#d8ee00"/>
<rect x="889.13" y="496.70000000000005" width="1.1" height="32" fill="#9ad400"/>
<rect x="906.12" y="496.70000000000005" width="1.1" height="32" fill="#9ad400"/>
<rect x="922.90" y="496.70000000000005" width="1.5" height="32" fill="#d8ee00"/>
<rect x="939.88" y="496.70000000000005" width="1.5" height="32" fill="#d8ee00"/>
<rect x="957.07" y="496.70000000000005" width="1.1" height="32" fill="#9ad400"/>
<rect x="973.85" y="496.70000000000005" width="1.5" height="32" fill="#d8ee00"/>
<rect x="990.83" y="496.70000000000005" width="1.5" height="32" fill="#d8ee00"/>
<rect x="1008.02" y="496.70000000000005" width="1.1" height="32" fill="#9ad400"/>
<rect x="1024.80" y="496.70000000000005" width="1.5" height="32" fill="#d8ee00"/>
<rect x="1041.78" y="496.70000000000005" width="1.5" height="32" fill="#d8ee00"/>
<rect x="1058.97" y="496.70000000000005" width="1.1" height="32" fill="#9ad400"/>
<rect x="57" y="536.1500000000001" width="120.00" height="32" fill="#2e2e2e"/>
<rect x="177" y="536.1500000000001" width="31.70" height="32" fill="#8a1111"/>
<rect x="208.7" y="536.1500000000001" width="64.30" height="32" fill="#fff000"/>
<rect x="273" y="536.1500000000001" width="4.80" height="32" fill="#0aaa0a"/>
<rect x="277.8" y="536.1500000000001" width="22.60" height="32" fill="#fff000"/>
<rect x="300.4" y="536.1500000000001" width="776.60" height="32" fill="#0aaa0a"/>
<rect x="277.53" y="536.1500000000001" width="1.5" height="32" fill="#d8ee00"/>
<rect x="311.50" y="536.1500000000001" width="1.5" height="32" fill="#d8ee00"/>
<rect x="328.48" y="536.1500000000001" width="1.5" height="32" fill="#d8ee00"/>
<rect x="345.67" y="536.1500000000001" width="1.1" height="32" fill="#9ad400"/>
<rect x="362.65" y="536.1500000000001" width="1.1" height="32" fill="#9ad400"/>
<rect x="379.43" y="536.1500000000001" width="1.5" height="32" fill="#d8ee00"/>
<rect x="396.42" y="536.1500000000001" width="1.5" height="32" fill="#d8ee00"/>
<rect x="413.60" y="536.1500000000001" width="1.1" height="32" fill="#9ad400"/>
<rect x="430.38" y="536.1500000000001" width="1.5" height="32" fill="#d8ee00"/>
<rect x="447.37" y="536.1500000000001" width="1.5" height="32" fill="#d8ee00"/>
<rect x="464.55" y="536.1500000000001" width="1.1" height="32" fill="#9ad400"/>
<rect x="481.33" y="536.1500000000001" width="1.5" height="32" fill="#d8ee00"/>
<rect x="498.32" y="536.1500000000001" width="1.5" height="32" fill="#d8ee00"/>
<rect x="515.50" y="536.1500000000001" width="1.1" height="32" fill="#9ad400"/>
<rect x="532.28" y="536.1500000000001" width="1.5" height="32" fill="#d8ee00"/>
<rect x="549.27" y="536.1500000000001" width="1.5" height="32" fill="#d8ee00"/>
<rect x="566.45" y="536.1500000000001" width="1.1" height="32" fill="#9ad400"/>
<rect x="583.43" y="536.1500000000001" width="1.1" height="32" fill="#9ad400"/>
<rect x="600.22" y="536.1500000000001" width="1.5" height="32" fill="#d8ee00"/>
<rect x="617.20" y="536.1500000000001" width="1.5" height="32" fill="#d8ee00"/>
<rect x="634.38" y="536.1500000000001" width="1.1" height="32" fill="#9ad400"/>
<rect x="651.17" y="536.1500000000001" width="1.5" height="32" fill="#d8ee00"/>
<rect x="668.15" y="536.1500000000001" width="1.5" height="32" fill="#d8ee00"/>
<rect x="685.33" y="536.1500000000001" width="1.1" height="32" fill="#9ad400"/>
<rect x="702.12" y="536.1500000000001" width="1.5" height="32" fill="#d8ee00"/>
<rect x="719.10" y="536.1500000000001" width="1.5" height="32" fill="#d8ee00"/>
<rect x="736.28" y="536.1500000000001" width="1.1" height="32" fill="#9ad400"/>
<rect x="753.07" y="536.1500000000001" width="1.5" height="32" fill="#d8ee00"/>
<rect x="770.05" y="536.1500000000001" width="1.5" height="32" fill="#d8ee00"/>
<rect x="787.23" y="536.1500000000001" width="1.1" height="32" fill="#9ad400"/>
<rect x="804.22" y="536.1500000000001" width="1.1" height="32" fill="#9ad400"/>
<rect x="821.00" y="536.1500000000001" width="1.5" height="32" fill="#d8ee00"/>
<rect x="837.98" y="536.1500000000001" width="1.5" height="32" fill="#d8ee00"/>
<rect x="855.17" y="536.1500000000001" width="1.1" height="32" fill="#9ad400"/>
<rect x="871.95" y="536.1500000000001" width="1.5" height="32" fill="#d8ee00"/>
<rect x="888.93" y="536.1500000000001" width="1.5" height="32" fill="#d8ee00"/>
<rect x="906.12" y="536.1500000000001" width="1.1" height="32" fill="#9ad400"/>
<rect x="922.90" y="536.1500000000001" width="1.5" height="32" fill="#d8ee00"/>
<rect x="939.88" y="536.1500000000001" width="1.5" height="32" fill="#d8ee00"/>
<rect x="957.07" y="536.1500000000001" width="1.1" height="32" fill="#9ad400"/>
<rect x="973.85" y="536.1500000000001" width="1.5" height="32" fill="#d8ee00"/>
<rect x="990.83" y="536.1500000000001" width="1.5" height="32" fill="#d8ee00"/>
<rect x="1008.02" y="536.1500000000001" width="1.1" height="32" fill="#9ad400"/>
<rect x="1025.00" y="536.1500000000001" width="1.1" height="32" fill="#9ad400"/>
<rect x="1041.78" y="536.1500000000001" width="1.5" height="32" fill="#d8ee00"/>
<rect x="1058.77" y="536.1500000000001" width="1.5" height="32" fill="#d8ee00"/>
<rect x="57" y="575.6" width="201.80" height="32" fill="#0aaa0a"/>
<rect x="56.75" y="575.6" width="1.5" height="32" fill="#d8ee00"/>
<rect x="73.73" y="575.6" width="1.5" height="32" fill="#d8ee00"/>
<rect x="90.92" y="575.6" width="1.1" height="32" fill="#9ad400"/>
<rect x="107.70" y="575.6" width="1.5" height="32" fill="#d8ee00"/>
<rect x="124.68" y="575.6" width="1.5" height="32" fill="#d8ee00"/>
<rect x="141.87" y="575.6" width="1.1" height="32" fill="#9ad400"/>
<rect x="158.65" y="575.6" width="1.5" height="32" fill="#d8ee00"/>
<rect x="175.63" y="575.6" width="1.5" height="32" fill="#d8ee00"/>
<rect x="192.82" y="575.6" width="1.1" height="32" fill="#9ad400"/>
<rect x="209.60" y="575.6" width="1.5" height="32" fill="#d8ee00"/>
<rect x="226.58" y="575.6" width="1.5" height="32" fill="#d8ee00"/>
<rect x="243.77" y="575.6" width="1.1" height="32" fill="#9ad400"/>
<line x1="142.41666666666669" y1="257.6" x2="142.41666666666669" y2="729" stroke="#808080" stroke-width="1" stroke-dasharray="4.5,3.7"/>
<line x1="227.33333333333334" y1="257.6" x2="227.33333333333334" y2="729" stroke="#808080" stroke-width="1" stroke-dasharray="4.5,3.7"/>
<rect x="311.65" y="256" width="1.2" height="473" fill="#c8c8c8"/>
<line x1="397.1666666666667" y1="257.6" x2="397.1666666666667" y2="729" stroke="#808080" stroke-width="1" stroke-dasharray="4.5,3.7"/>
<line x1="482.08333333333337" y1="257.6" x2="482.08333333333337" y2="729" stroke="#808080" stroke-width="1" stroke-dasharray="4.5,3.7"/>
<rect x="566.40" y="256" width="1.2" height="473" fill="#c8c8c8"/>
<line x1="651.9166666666667" y1="257.6" x2="651.9166666666667" y2="729" stroke="#808080" stroke-width="1" stroke-dasharray="4.5,3.7"/>
<line x1="736.8333333333334" y1="257.6" x2="736.8333333333334" y2="729" stroke="#808080" stroke-width="1" stroke-dasharray="4.5,3.7"/>
<rect x="821.15" y="256" width="1.2" height="473" fill="#c8c8c8"/>
<line x1="906.6666666666667" y1="257.6" x2="906.6666666666667" y2="729" stroke="#808080" stroke-width="1" stroke-dasharray="4.5,3.7"/>
<line x1="991.5833333333334" y1="257.6" x2="991.5833333333334" y2="729" stroke="#808080" stroke-width="1" stroke-dasharray="4.5,3.7"/>
<circle cx="159.4" cy="292.00" r="3.1" fill="#000" stroke="#f0f0f0" stroke-width="2.1"/>
<circle cx="176.38333333333333" cy="292.00" r="3.1" fill="#000" stroke="#f0f0f0" stroke-width="2.1"/>
<circle cx="193.36666666666667" cy="292.00" r="3.1" fill="#000" stroke="#f0f0f0" stroke-width="2.1"/>
<circle cx="210.35000000000002" cy="292.00" r="3.1" fill="#000" stroke="#f0f0f0" stroke-width="2.1"/>
<circle cx="227.33333333333334" cy="292.00" r="3.1" fill="#000" stroke="#f0f0f0" stroke-width="2.1"/>
<circle cx="244.31666666666666" cy="292.00" r="3.1" fill="#000" stroke="#f0f0f0" stroke-width="2.1"/>
<circle cx="261.3" cy="292.00" r="3.1" fill="#000" stroke="#f0f0f0" stroke-width="2.1"/>
<circle cx="278.28333333333336" cy="292.00" r="3.1" fill="#000" stroke="#f0f0f0" stroke-width="2.1"/>
<circle cx="295.26666666666665" cy="292.00" r="3.1" fill="#000" stroke="#f0f0f0" stroke-width="2.1"/>
<circle cx="312.25" cy="292.00" r="3.1" fill="#000" stroke="#f0f0f0" stroke-width="2.1"/>
<circle cx="329.23333333333335" cy="292.00" r="3.1" fill="#000" stroke="#f0f0f0" stroke-width="2.1"/>
<circle cx="346.2166666666667" cy="292.00" r="3.1" fill="#000" stroke="#f0f0f0" stroke-width="2.1"/>
<circle cx="363.20000000000005" cy="292.00" r="3.1" fill="#000" stroke="#f0f0f0" stroke-width="2.1"/>
<circle cx="380.18333333333334" cy="292.00" r="3.1" fill="#000" stroke="#f0f0f0" stroke-width="2.1"/>
<circle cx="397.1666666666667" cy="292.00" r="3.1" fill="#000" stroke="#f0f0f0" stroke-width="2.1"/>
<circle cx="414.15000000000003" cy="292.00" r="3.1" fill="#000" stroke="#f0f0f0" stroke-width="2.1"/>
<circle cx="431.1333333333333" cy="292.00" r="3.1" fill="#000" stroke="#f0f0f0" stroke-width="2.1"/>
<circle cx="448.1166666666667" cy="292.00" r="3.1" fill="#000" stroke="#f0f0f0" stroke-width="2.1"/>
<circle cx="465.1" cy="292.00" r="3.1" fill="#000" stroke="#f0f0f0" stroke-width="2.1"/>
<circle cx="482.08333333333337" cy="292.00" r="3.1" fill="#000" stroke="#f0f0f0" stroke-width="2.1"/>
<circle cx="499.0666666666667" cy="292.00" r="3.1" fill="#000" stroke="#f0f0f0" stroke-width="2.1"/>
<circle cx="516.05" cy="292.00" r="3.1" fill="#000" stroke="#f0f0f0" stroke-width="2.1"/>
<circle cx="533.0333333333333" cy="292.00" r="3.1" fill="#000" stroke="#f0f0f0" stroke-width="2.1"/>
<circle cx="550.0166666666667" cy="292.00" r="3.1" fill="#000" stroke="#f0f0f0" stroke-width="2.1"/>
<circle cx="651.9166666666667" cy="292.00" r="3.1" fill="#000" stroke="#f0f0f0" stroke-width="2.1"/>
<circle cx="668.9000000000001" cy="292.00" r="3.1" fill="#000" stroke="#f0f0f0" stroke-width="2.1"/>
<circle cx="685.8833333333333" cy="292.00" r="3.1" fill="#000" stroke="#f0f0f0" stroke-width="2.1"/>
<circle cx="702.8666666666667" cy="292.00" r="3.1" fill="#000" stroke="#f0f0f0" stroke-width="2.1"/>
<circle cx="719.85" cy="292.00" r="3.1" fill="#000" stroke="#f0f0f0" stroke-width="2.1"/>
<circle cx="736.8333333333334" cy="292.00" r="3.1" fill="#000" stroke="#f0f0f0" stroke-width="2.1"/>
<circle cx="753.8166666666667" cy="292.00" r="3.1" fill="#000" stroke="#f0f0f0" stroke-width="2.1"/>
<circle cx="770.8000000000001" cy="292.00" r="3.1" fill="#000" stroke="#f0f0f0" stroke-width="2.1"/>
<circle cx="787.7833333333334" cy="292.00" r="3.1" fill="#000" stroke="#f0f0f0" stroke-width="2.1"/>
<circle cx="804.7666666666667" cy="292.00" r="3.1" fill="#000" stroke="#f0f0f0" stroke-width="2.1"/>
<circle cx="821.75" cy="292.00" r="3.1" fill="#000" stroke="#f0f0f0" stroke-width="2.1"/>
<circle cx="838.7333333333333" cy="292.00" r="3.1" fill="#000" stroke="#f0f0f0" stroke-width="2.1"/>
<circle cx="855.7166666666667" cy="292.00" r="3.1" fill="#000" stroke="#f0f0f0" stroke-width="2.1"/>
<circle cx="872.7" cy="292.00" r="3.1" fill="#000" stroke="#f0f0f0" stroke-width="2.1"/>
<circle cx="889.6833333333334" cy="292.00" r="3.1" fill="#000" stroke="#f0f0f0" stroke-width="2.1"/>
<circle cx="906.6666666666667" cy="292.00" r="3.1" fill="#000" stroke="#f0f0f0" stroke-width="2.1"/>
<circle cx="923.6500000000001" cy="292.00" r="3.1" fill="#000" stroke="#f0f0f0" stroke-width="2.1"/>
<circle cx="940.6333333333334" cy="292.00" r="3.1" fill="#000" stroke="#f0f0f0" stroke-width="2.1"/>
<circle cx="957.6166666666667" cy="292.00" r="3.1" fill="#000" stroke="#f0f0f0" stroke-width="2.1"/>
<circle cx="974.6" cy="292.00" r="3.1" fill="#000" stroke="#f0f0f0" stroke-width="2.1"/>
<circle cx="991.5833333333334" cy="292.00" r="3.1" fill="#000" stroke="#f0f0f0" stroke-width="2.1"/>
<circle cx="1008.5666666666667" cy="292.00" r="3.1" fill="#000" stroke="#f0f0f0" stroke-width="2.1"/>
<circle cx="1025.5500000000002" cy="292.00" r="3.1" fill="#000" stroke="#f0f0f0" stroke-width="2.1"/>
<circle cx="1042.5333333333333" cy="292.00" r="3.1" fill="#000" stroke="#f0f0f0" stroke-width="2.1"/>
<circle cx="1059.5166666666669" cy="292.00" r="3.1" fill="#000" stroke="#f0f0f0" stroke-width="2.1"/>
<circle cx="57.5" cy="331.45" r="3.1" fill="#000" stroke="#f0f0f0" stroke-width="2.1"/>
<circle cx="74.48333333333333" cy="331.45" r="3.1" fill="#000" stroke="#f0f0f0" stroke-width="2.1"/>
<circle cx="91.46666666666667" cy="331.45" r="3.1" fill="#000" stroke="#f0f0f0" stroke-width="2.1"/>
<circle cx="108.45" cy="331.45" r="3.1" fill="#000" stroke="#f0f0f0" stroke-width="2.1"/>
<circle cx="125.43333333333334" cy="331.45" r="3.1" fill="#000" stroke="#f0f0f0" stroke-width="2.1"/>
<circle cx="142.41666666666669" cy="331.45" r="3.1" fill="#000" stroke="#f0f0f0" stroke-width="2.1"/>
<circle cx="159.4" cy="331.45" r="3.1" fill="#000" stroke="#f0f0f0" stroke-width="2.1"/>
<circle cx="176.38333333333333" cy="331.45" r="3.1" fill="#000" stroke="#f0f0f0" stroke-width="2.1"/>
<circle cx="193.36666666666667" cy="331.45" r="3.1" fill="#000" stroke="#f0f0f0" stroke-width="2.1"/>
<circle cx="210.35000000000002" cy="331.45" r="3.1" fill="#000" stroke="#f0f0f0" stroke-width="2.1"/>
<circle cx="227.33333333333334" cy="331.45" r="3.1" fill="#000" stroke="#f0f0f0" stroke-width="2.1"/>
<circle cx="244.31666666666666" cy="331.45" r="3.1" fill="#000" stroke="#f0f0f0" stroke-width="2.1"/>
<circle cx="261.3" cy="331.45" r="3.1" fill="#000" stroke="#f0f0f0" stroke-width="2.1"/>
<circle cx="278.28333333333336" cy="331.45" r="3.1" fill="#000" stroke="#f0f0f0" stroke-width="2.1"/>
<circle cx="295.26666666666665" cy="331.45" r="3.1" fill="#000" stroke="#f0f0f0" stroke-width="2.1"/>
<circle cx="312.25" cy="331.45" r="3.1" fill="#000" stroke="#f0f0f0" stroke-width="2.1"/>
<circle cx="329.23333333333335" cy="331.45" r="3.1" fill="#000" stroke="#f0f0f0" stroke-width="2.1"/>
<circle cx="346.2166666666667" cy="331.45" r="3.1" fill="#000" stroke="#f0f0f0" stroke-width="2.1"/>
<circle cx="363.20000000000005" cy="331.45" r="3.1" fill="#000" stroke="#f0f0f0" stroke-width="2.1"/>
<circle cx="380.18333333333334" cy="331.45" r="3.1" fill="#000" stroke="#f0f0f0" stroke-width="2.1"/>
<circle cx="397.1666666666667" cy="331.45" r="3.1" fill="#000" stroke="#f0f0f0" stroke-width="2.1"/>
<circle cx="414.15000000000003" cy="331.45" r="3.1" fill="#000" stroke="#f0f0f0" stroke-width="2.1"/>
<circle cx="431.1333333333333" cy="331.45" r="3.1" fill="#000" stroke="#f0f0f0" stroke-width="2.1"/>
<circle cx="448.1166666666667" cy="331.45" r="3.1" fill="#000" stroke="#f0f0f0" stroke-width="2.1"/>
<circle cx="465.1" cy="331.45" r="3.1" fill="#000" stroke="#f0f0f0" stroke-width="2.1"/>
<circle cx="482.08333333333337" cy="331.45" r="3.1" fill="#000" stroke="#f0f0f0" stroke-width="2.1"/>
<circle cx="499.0666666666667" cy="331.45" r="3.1" fill="#000" stroke="#f0f0f0" stroke-width="2.1"/>
<circle cx="516.05" cy="331.45" r="3.1" fill="#000" stroke="#f0f0f0" stroke-width="2.1"/>
<circle cx="533.0333333333333" cy="331.45" r="3.1" fill="#000" stroke="#f0f0f0" stroke-width="2.1"/>
<circle cx="550.0166666666667" cy="331.45" r="3.1" fill="#000" stroke="#f0f0f0" stroke-width="2.1"/>
<circle cx="567.0" cy="331.45" r="3.1" fill="#000" stroke="#f0f0f0" stroke-width="2.1"/>
<circle cx="583.9833333333333" cy="331.45" r="3.1" fill="#000" stroke="#f0f0f0" stroke-width="2.1"/>
<circle cx="600.9666666666667" cy="331.45" r="3.1" fill="#000" stroke="#f0f0f0" stroke-width="2.1"/>
<circle cx="617.95" cy="331.45" r="3.1" fill="#000" stroke="#f0f0f0" stroke-width="2.1"/>
<circle cx="634.9333333333334" cy="331.45" r="3.1" fill="#000" stroke="#f0f0f0" stroke-width="2.1"/>
<circle cx="651.9166666666667" cy="331.45" r="3.1" fill="#000" stroke="#f0f0f0" stroke-width="2.1"/>
<circle cx="668.9000000000001" cy="331.45" r="3.1" fill="#000" stroke="#f0f0f0" stroke-width="2.1"/>
<circle cx="685.8833333333333" cy="331.45" r="3.1" fill="#000" stroke="#f0f0f0" stroke-width="2.1"/>
<circle cx="702.8666666666667" cy="331.45" r="3.1" fill="#000" stroke="#f0f0f0" stroke-width="2.1"/>
<circle cx="719.85" cy="331.45" r="3.1" fill="#000" stroke="#f0f0f0" stroke-width="2.1"/>
<circle cx="736.8333333333334" cy="331.45" r="3.1" fill="#000" stroke="#f0f0f0" stroke-width="2.1"/>
<circle cx="753.8166666666667" cy="331.45" r="3.1" fill="#000" stroke="#f0f0f0" stroke-width="2.1"/>
<circle cx="770.8000000000001" cy="331.45" r="3.1" fill="#000" stroke="#f0f0f0" stroke-width="2.1"/>
<circle cx="787.7833333333334" cy="331.45" r="3.1" fill="#000" stroke="#f0f0f0" stroke-width="2.1"/>
<circle cx="804.7666666666667" cy="331.45" r="3.1" fill="#000" stroke="#f0f0f0" stroke-width="2.1"/>
<circle cx="821.75" cy="331.45" r="3.1" fill="#000" stroke="#f0f0f0" stroke-width="2.1"/>
<circle cx="838.7333333333333" cy="331.45" r="3.1" fill="#000" stroke="#f0f0f0" stroke-width="2.1"/>
<circle cx="855.7166666666667" cy="331.45" r="3.1" fill="#000" stroke="#f0f0f0" stroke-width="2.1"/>
<circle cx="872.7" cy="331.45" r="3.1" fill="#000" stroke="#f0f0f0" stroke-width="2.1"/>
<circle cx="889.6833333333334" cy="331.45" r="3.1" fill="#000" stroke="#f0f0f0" stroke-width="2.1"/>
<circle cx="906.6666666666667" cy="331.45" r="3.1" fill="#000" stroke="#f0f0f0" stroke-width="2.1"/>
<circle cx="923.6500000000001" cy="331.45" r="3.1" fill="#000" stroke="#f0f0f0" stroke-width="2.1"/>
<circle cx="940.6333333333334" cy="331.45" r="3.1" fill="#000" stroke="#f0f0f0" stroke-width="2.1"/>
<circle cx="957.6166666666667" cy="331.45" r="3.1" fill="#000" stroke="#f0f0f0" stroke-width="2.1"/>
<circle cx="974.6" cy="331.45" r="3.1" fill="#000" stroke="#f0f0f0" stroke-width="2.1"/>
<circle cx="991.5833333333334" cy="331.45" r="3.1" fill="#000" stroke="#f0f0f0" stroke-width="2.1"/>
<circle cx="1008.5666666666667" cy="331.45" r="3.1" fill="#000" stroke="#f0f0f0" stroke-width="2.1"/>
<circle cx="1025.5500000000002" cy="331.45" r="3.1" fill="#000" stroke="#f0f0f0" stroke-width="2.1"/>
<circle cx="1042.5333333333333" cy="331.45" r="3.1" fill="#000" stroke="#f0f0f0" stroke-width="2.1"/>
<circle cx="1059.5166666666669" cy="331.45" r="3.1" fill="#000" stroke="#f0f0f0" stroke-width="2.1"/>
<circle cx="57.5" cy="370.90" r="3.1" fill="#000" stroke="#f0f0f0" stroke-width="2.1"/>
<circle cx="74.48333333333333" cy="370.90" r="3.1" fill="#000" stroke="#f0f0f0" stroke-width="2.1"/>
<circle cx="91.46666666666667" cy="370.90" r="3.1" fill="#000" stroke="#f0f0f0" stroke-width="2.1"/>
<circle cx="108.45" cy="370.90" r="3.1" fill="#000" stroke="#f0f0f0" stroke-width="2.1"/>
<circle cx="125.43333333333334" cy="370.90" r="3.1" fill="#000" stroke="#f0f0f0" stroke-width="2.1"/>
<circle cx="142.41666666666669" cy="370.90" r="3.1" fill="#000" stroke="#f0f0f0" stroke-width="2.1"/>
<circle cx="159.4" cy="370.90" r="3.1" fill="#000" stroke="#f0f0f0" stroke-width="2.1"/>
<circle cx="176.38333333333333" cy="370.90" r="3.1" fill="#000" stroke="#f0f0f0" stroke-width="2.1"/>
<circle cx="193.36666666666667" cy="370.90" r="3.1" fill="#000" stroke="#f0f0f0" stroke-width="2.1"/>
<circle cx="210.35000000000002" cy="370.90" r="3.1" fill="#000" stroke="#f0f0f0" stroke-width="2.1"/>
<circle cx="227.33333333333334" cy="370.90" r="3.1" fill="#000" stroke="#f0f0f0" stroke-width="2.1"/>
<circle cx="244.31666666666666" cy="370.90" r="3.1" fill="#000" stroke="#f0f0f0" stroke-width="2.1"/>
<circle cx="261.3" cy="370.90" r="3.1" fill="#000" stroke="#f0f0f0" stroke-width="2.1"/>
<circle cx="278.28333333333336" cy="370.90" r="3.1" fill="#000" stroke="#f0f0f0" stroke-width="2.1"/>
<circle cx="295.26666666666665" cy="370.90" r="3.1" fill="#000" stroke="#f0f0f0" stroke-width="2.1"/>
<circle cx="312.25" cy="370.90" r="3.1" fill="#000" stroke="#f0f0f0" stroke-width="2.1"/>
<circle cx="329.23333333333335" cy="370.90" r="3.1" fill="#000" stroke="#f0f0f0" stroke-width="2.1"/>
<circle cx="346.2166666666667" cy="370.90" r="3.1" fill="#000" stroke="#f0f0f0" stroke-width="2.1"/>
<circle cx="363.20000000000005" cy="370.90" r="3.1" fill="#000" stroke="#f0f0f0" stroke-width="2.1"/>
<circle cx="380.18333333333334" cy="370.90" r="3.1" fill="#000" stroke="#f0f0f0" stroke-width="2.1"/>
<circle cx="397.1666666666667" cy="370.90" r="3.1" fill="#000" stroke="#f0f0f0" stroke-width="2.1"/>
<circle cx="414.15000000000003" cy="370.90" r="3.1" fill="#000" stroke="#f0f0f0" stroke-width="2.1"/>
<circle cx="431.1333333333333" cy="370.90" r="3.1" fill="#000" stroke="#f0f0f0" stroke-width="2.1"/>
<circle cx="448.1166666666667" cy="370.90" r="3.1" fill="#000" stroke="#f0f0f0" stroke-width="2.1"/>
<circle cx="465.1" cy="370.90" r="3.1" fill="#000" stroke="#f0f0f0" stroke-width="2.1"/>
<circle cx="482.08333333333337" cy="370.90" r="3.1" fill="#000" stroke="#f0f0f0" stroke-width="2.1"/>
<circle cx="499.0666666666667" cy="370.90" r="3.1" fill="#000" stroke="#f0f0f0" stroke-width="2.1"/>
<circle cx="516.05" cy="370.90" r="3.1" fill="#000" stroke="#f0f0f0" stroke-width="2.1"/>
<circle cx="533.0333333333333" cy="370.90" r="3.1" fill="#000" stroke="#f0f0f0" stroke-width="2.1"/>
<circle cx="550.0166666666667" cy="370.90" r="3.1" fill="#000" stroke="#f0f0f0" stroke-width="2.1"/>
<circle cx="567.0" cy="370.90" r="3.1" fill="#000" stroke="#f0f0f0" stroke-width="2.1"/>
<circle cx="583.9833333333333" cy="370.90" r="3.1" fill="#000" stroke="#f0f0f0" stroke-width="2.1"/>
<circle cx="600.9666666666667" cy="370.90" r="3.1" fill="#000" stroke="#f0f0f0" stroke-width="2.1"/>
<circle cx="617.95" cy="370.90" r="3.1" fill="#000" stroke="#f0f0f0" stroke-width="2.1"/>
<circle cx="634.9333333333334" cy="370.90" r="3.1" fill="#000" stroke="#f0f0f0" stroke-width="2.1"/>
<circle cx="651.9166666666667" cy="370.90" r="3.1" fill="#000" stroke="#f0f0f0" stroke-width="2.1"/>
<circle cx="668.9000000000001" cy="370.90" r="3.1" fill="#000" stroke="#f0f0f0" stroke-width="2.1"/>
<circle cx="685.8833333333333" cy="370.90" r="3.1" fill="#000" stroke="#f0f0f0" stroke-width="2.1"/>
<circle cx="702.8666666666667" cy="370.90" r="3.1" fill="#000" stroke="#f0f0f0" stroke-width="2.1"/>
<circle cx="719.85" cy="370.90" r="3.1" fill="#000" stroke="#f0f0f0" stroke-width="2.1"/>
<circle cx="736.8333333333334" cy="370.90" r="3.1" fill="#000" stroke="#f0f0f0" stroke-width="2.1"/>
<circle cx="821.75" cy="370.90" r="3.1" fill="#000" stroke="#f0f0f0" stroke-width="2.1"/>
<circle cx="838.7333333333333" cy="370.90" r="3.1" fill="#000" stroke="#f0f0f0" stroke-width="2.1"/>
<circle cx="855.7166666666667" cy="370.90" r="3.1" fill="#000" stroke="#f0f0f0" stroke-width="2.1"/>
<circle cx="872.7" cy="370.90" r="3.1" fill="#000" stroke="#f0f0f0" stroke-width="2.1"/>
<circle cx="889.6833333333334" cy="370.90" r="3.1" fill="#000" stroke="#f0f0f0" stroke-width="2.1"/>
<circle cx="906.6666666666667" cy="370.90" r="3.1" fill="#000" stroke="#f0f0f0" stroke-width="2.1"/>
<circle cx="923.6500000000001" cy="370.90" r="3.1" fill="#000" stroke="#f0f0f0" stroke-width="2.1"/>
<circle cx="940.6333333333334" cy="370.90" r="3.1" fill="#000" stroke="#f0f0f0" stroke-width="2.1"/>
<circle cx="957.6166666666667" cy="370.90" r="3.1" fill="#000" stroke="#f0f0f0" stroke-width="2.1"/>
<circle cx="974.6" cy="370.90" r="3.1" fill="#000" stroke="#f0f0f0" stroke-width="2.1"/>
<circle cx="991.5833333333334" cy="370.90" r="3.1" fill="#000" stroke="#f0f0f0" stroke-width="2.1"/>
<circle cx="1008.5666666666667" cy="370.90" r="3.1" fill="#000" stroke="#f0f0f0" stroke-width="2.1"/>
<circle cx="1025.5500000000002" cy="370.90" r="3.1" fill="#000" stroke="#f0f0f0" stroke-width="2.1"/>
<circle cx="1042.5333333333333" cy="370.90" r="3.1" fill="#000" stroke="#f0f0f0" stroke-width="2.1"/>
<circle cx="1059.5166666666669" cy="370.90" r="3.1" fill="#000" stroke="#f0f0f0" stroke-width="2.1"/>
<circle cx="57.5" cy="410.35" r="3.1" fill="#000" stroke="#f0f0f0" stroke-width="2.1"/>
<circle cx="74.48333333333333" cy="410.35" r="3.1" fill="#000" stroke="#f0f0f0" stroke-width="2.1"/>
<circle cx="91.46666666666667" cy="410.35" r="3.1" fill="#000" stroke="#f0f0f0" stroke-width="2.1"/>
<circle cx="108.45" cy="410.35" r="3.1" fill="#000" stroke="#f0f0f0" stroke-width="2.1"/>
<circle cx="125.43333333333334" cy="410.35" r="3.1" fill="#000" stroke="#f0f0f0" stroke-width="2.1"/>
<circle cx="142.41666666666669" cy="410.35" r="3.1" fill="#000" stroke="#f0f0f0" stroke-width="2.1"/>
<circle cx="159.4" cy="410.35" r="3.1" fill="#000" stroke="#f0f0f0" stroke-width="2.1"/>
<circle cx="176.38333333333333" cy="410.35" r="3.1" fill="#000" stroke="#f0f0f0" stroke-width="2.1"/>
<circle cx="193.36666666666667" cy="410.35" r="3.1" fill="#000" stroke="#f0f0f0" stroke-width="2.1"/>
<circle cx="210.35000000000002" cy="410.35" r="3.1" fill="#000" stroke="#f0f0f0" stroke-width="2.1"/>
<circle cx="227.33333333333334" cy="410.35" r="3.1" fill="#000" stroke="#f0f0f0" stroke-width="2.1"/>
<circle cx="244.31666666666666" cy="410.35" r="3.1" fill="#000" stroke="#f0f0f0" stroke-width="2.1"/>
<circle cx="261.3" cy="410.35" r="3.1" fill="#000" stroke="#f0f0f0" stroke-width="2.1"/>
<circle cx="278.28333333333336" cy="410.35" r="3.1" fill="#000" stroke="#f0f0f0" stroke-width="2.1"/>
<circle cx="295.26666666666665" cy="410.35" r="3.1" fill="#000" stroke="#f0f0f0" stroke-width="2.1"/>
<circle cx="312.25" cy="410.35" r="3.1" fill="#000" stroke="#f0f0f0" stroke-width="2.1"/>
<circle cx="329.23333333333335" cy="410.35" r="3.1" fill="#000" stroke="#f0f0f0" stroke-width="2.1"/>
<circle cx="346.2166666666667" cy="410.35" r="3.1" fill="#000" stroke="#f0f0f0" stroke-width="2.1"/>
<circle cx="363.20000000000005" cy="410.35" r="3.1" fill="#000" stroke="#f0f0f0" stroke-width="2.1"/>
<circle cx="380.18333333333334" cy="410.35" r="3.1" fill="#000" stroke="#f0f0f0" stroke-width="2.1"/>
<circle cx="397.1666666666667" cy="410.35" r="3.1" fill="#000" stroke="#f0f0f0" stroke-width="2.1"/>
<circle cx="414.15000000000003" cy="410.35" r="3.1" fill="#000" stroke="#f0f0f0" stroke-width="2.1"/>
<circle cx="431.1333333333333" cy="410.35" r="3.1" fill="#000" stroke="#f0f0f0" stroke-width="2.1"/>
<circle cx="448.1166666666667" cy="410.35" r="3.1" fill="#000" stroke="#f0f0f0" stroke-width="2.1"/>
<circle cx="465.1" cy="410.35" r="3.1" fill="#000" stroke="#f0f0f0" stroke-width="2.1"/>
<circle cx="482.08333333333337" cy="410.35" r="3.1" fill="#000" stroke="#f0f0f0" stroke-width="2.1"/>
<circle cx="499.0666666666667" cy="410.35" r="3.1" fill="#000" stroke="#f0f0f0" stroke-width="2.1"/>
<circle cx="516.05" cy="410.35" r="3.1" fill="#000" stroke="#f0f0f0" stroke-width="2.1"/>
<circle cx="533.0333333333333" cy="410.35" r="3.1" fill="#000" stroke="#f0f0f0" stroke-width="2.1"/>
<circle cx="550.0166666666667" cy="410.35" r="3.1" fill="#000" stroke="#f0f0f0" stroke-width="2.1"/>
<circle cx="567.0" cy="410.35" r="3.1" fill="#000" stroke="#f0f0f0" stroke-width="2.1"/>
<circle cx="583.9833333333333" cy="410.35" r="3.1" fill="#000" stroke="#f0f0f0" stroke-width="2.1"/>
<circle cx="600.9666666666667" cy="410.35" r="3.1" fill="#000" stroke="#f0f0f0" stroke-width="2.1"/>
<circle cx="617.95" cy="410.35" r="3.1" fill="#000" stroke="#f0f0f0" stroke-width="2.1"/>
<circle cx="634.9333333333334" cy="410.35" r="3.1" fill="#000" stroke="#f0f0f0" stroke-width="2.1"/>
<circle cx="651.9166666666667" cy="410.35" r="3.1" fill="#000" stroke="#f0f0f0" stroke-width="2.1"/>
<circle cx="668.9000000000001" cy="410.35" r="3.1" fill="#000" stroke="#f0f0f0" stroke-width="2.1"/>
<circle cx="685.8833333333333" cy="410.35" r="3.1" fill="#000" stroke="#f0f0f0" stroke-width="2.1"/>
<circle cx="702.8666666666667" cy="410.35" r="3.1" fill="#000" stroke="#f0f0f0" stroke-width="2.1"/>
<circle cx="719.85" cy="410.35" r="3.1" fill="#000" stroke="#f0f0f0" stroke-width="2.1"/>
<circle cx="736.8333333333334" cy="410.35" r="3.1" fill="#000" stroke="#f0f0f0" stroke-width="2.1"/>
<circle cx="753.8166666666667" cy="410.35" r="3.1" fill="#000" stroke="#f0f0f0" stroke-width="2.1"/>
<circle cx="770.8000000000001" cy="410.35" r="3.1" fill="#000" stroke="#f0f0f0" stroke-width="2.1"/>
<circle cx="787.7833333333334" cy="410.35" r="3.1" fill="#000" stroke="#f0f0f0" stroke-width="2.1"/>
<circle cx="804.7666666666667" cy="410.35" r="3.1" fill="#000" stroke="#f0f0f0" stroke-width="2.1"/>
<circle cx="821.75" cy="410.35" r="3.1" fill="#000" stroke="#f0f0f0" stroke-width="2.1"/>
<circle cx="838.7333333333333" cy="410.35" r="3.1" fill="#000" stroke="#f0f0f0" stroke-width="2.1"/>
<circle cx="855.7166666666667" cy="410.35" r="3.1" fill="#000" stroke="#f0f0f0" stroke-width="2.1"/>
<circle cx="872.7" cy="410.35" r="3.1" fill="#000" stroke="#f0f0f0" stroke-width="2.1"/>
<circle cx="889.6833333333334" cy="410.35" r="3.1" fill="#000" stroke="#f0f0f0" stroke-width="2.1"/>
<circle cx="906.6666666666667" cy="410.35" r="3.1" fill="#000" stroke="#f0f0f0" stroke-width="2.1"/>
<circle cx="923.6500000000001" cy="410.35" r="3.1" fill="#000" stroke="#f0f0f0" stroke-width="2.1"/>
<circle cx="940.6333333333334" cy="410.35" r="3.1" fill="#000" stroke="#f0f0f0" stroke-width="2.1"/>
<circle cx="957.6166666666667" cy="410.35" r="3.1" fill="#000" stroke="#f0f0f0" stroke-width="2.1"/>
<circle cx="1008.5666666666667" cy="410.35" r="3.1" fill="#000" stroke="#f0f0f0" stroke-width="2.1"/>
<circle cx="1025.5500000000002" cy="410.35" r="3.1" fill="#000" stroke="#f0f0f0" stroke-width="2.1"/>
<circle cx="1042.5333333333333" cy="410.35" r="3.1" fill="#000" stroke="#f0f0f0" stroke-width="2.1"/>
<circle cx="1059.5166666666669" cy="410.35" r="3.1" fill="#000" stroke="#f0f0f0" stroke-width="2.1"/>
<circle cx="57.5" cy="449.80" r="3.1" fill="#000" stroke="#f0f0f0" stroke-width="2.1"/>
<circle cx="74.48333333333333" cy="449.80" r="3.1" fill="#000" stroke="#f0f0f0" stroke-width="2.1"/>
<circle cx="91.46666666666667" cy="449.80" r="3.1" fill="#000" stroke="#f0f0f0" stroke-width="2.1"/>
<circle cx="108.45" cy="449.80" r="3.1" fill="#000" stroke="#f0f0f0" stroke-width="2.1"/>
<circle cx="125.43333333333334" cy="449.80" r="3.1" fill="#000" stroke="#f0f0f0" stroke-width="2.1"/>
<circle cx="142.41666666666669" cy="449.80" r="3.1" fill="#000" stroke="#f0f0f0" stroke-width="2.1"/>
<circle cx="159.4" cy="449.80" r="3.1" fill="#000" stroke="#f0f0f0" stroke-width="2.1"/>
<circle cx="176.38333333333333" cy="449.80" r="3.1" fill="#000" stroke="#f0f0f0" stroke-width="2.1"/>
<circle cx="193.36666666666667" cy="449.80" r="3.1" fill="#000" stroke="#f0f0f0" stroke-width="2.1"/>
<circle cx="210.35000000000002" cy="449.80" r="3.1" fill="#000" stroke="#f0f0f0" stroke-width="2.1"/>
<circle cx="227.33333333333334" cy="449.80" r="3.1" fill="#000" stroke="#f0f0f0" stroke-width="2.1"/>
<circle cx="244.31666666666666" cy="449.80" r="3.1" fill="#000" stroke="#f0f0f0" stroke-width="2.1"/>
<circle cx="261.3" cy="449.80" r="3.1" fill="#000" stroke="#f0f0f0" stroke-width="2.1"/>
<circle cx="278.28333333333336" cy="449.80" r="3.1" fill="#000" stroke="#f0f0f0" stroke-width="2.1"/>
<circle cx="295.26666666666665" cy="449.80" r="3.1" fill="#000" stroke="#f0f0f0" stroke-width="2.1"/>
<circle cx="312.25" cy="449.80" r="3.1" fill="#000" stroke="#f0f0f0" stroke-width="2.1"/>
<circle cx="329.23333333333335" cy="449.80" r="3.1" fill="#000" stroke="#f0f0f0" stroke-width="2.1"/>
<circle cx="346.2166666666667" cy="449.80" r="3.1" fill="#000" stroke="#f0f0f0" stroke-width="2.1"/>
<circle cx="363.20000000000005" cy="449.80" r="3.1" fill="#000" stroke="#f0f0f0" stroke-width="2.1"/>
<circle cx="380.18333333333334" cy="449.80" r="3.1" fill="#000" stroke="#f0f0f0" stroke-width="2.1"/>
<circle cx="397.1666666666667" cy="449.80" r="3.1" fill="#000" stroke="#f0f0f0" stroke-width="2.1"/>
<circle cx="414.15000000000003" cy="449.80" r="3.1" fill="#000" stroke="#f0f0f0" stroke-width="2.1"/>
<circle cx="431.1333333333333" cy="449.80" r="3.1" fill="#000" stroke="#f0f0f0" stroke-width="2.1"/>
<circle cx="448.1166666666667" cy="449.80" r="3.1" fill="#000" stroke="#f0f0f0" stroke-width="2.1"/>
<circle cx="465.1" cy="449.80" r="3.1" fill="#000" stroke="#f0f0f0" stroke-width="2.1"/>
<circle cx="482.08333333333337" cy="449.80" r="3.1" fill="#000" stroke="#f0f0f0" stroke-width="2.1"/>
<circle cx="499.0666666666667" cy="449.80" r="3.1" fill="#000" stroke="#f0f0f0" stroke-width="2.1"/>
<circle cx="516.05" cy="449.80" r="3.1" fill="#000" stroke="#f0f0f0" stroke-width="2.1"/>
<circle cx="533.0333333333333" cy="449.80" r="3.1" fill="#000" stroke="#f0f0f0" stroke-width="2.1"/>
<circle cx="550.0166666666667" cy="449.80" r="3.1" fill="#000" stroke="#f0f0f0" stroke-width="2.1"/>
<circle cx="567.0" cy="449.80" r="3.1" fill="#000" stroke="#f0f0f0" stroke-width="2.1"/>
<circle cx="583.9833333333333" cy="449.80" r="3.1" fill="#000" stroke="#f0f0f0" stroke-width="2.1"/>
<circle cx="600.9666666666667" cy="449.80" r="3.1" fill="#000" stroke="#f0f0f0" stroke-width="2.1"/>
<circle cx="617.95" cy="449.80" r="3.1" fill="#000" stroke="#f0f0f0" stroke-width="2.1"/>
<circle cx="634.9333333333334" cy="449.80" r="3.1" fill="#000" stroke="#f0f0f0" stroke-width="2.1"/>
<circle cx="651.9166666666667" cy="449.80" r="3.1" fill="#000" stroke="#f0f0f0" stroke-width="2.1"/>
<circle cx="668.9000000000001" cy="449.80" r="3.1" fill="#000" stroke="#f0f0f0" stroke-width="2.1"/>
<circle cx="685.8833333333333" cy="449.80" r="3.1" fill="#000" stroke="#f0f0f0" stroke-width="2.1"/>
<circle cx="702.8666666666667" cy="449.80" r="3.1" fill="#000" stroke="#f0f0f0" stroke-width="2.1"/>
<circle cx="719.85" cy="449.80" r="3.1" fill="#000" stroke="#f0f0f0" stroke-width="2.1"/>
<circle cx="736.8333333333334" cy="449.80" r="3.1" fill="#000" stroke="#f0f0f0" stroke-width="2.1"/>
<circle cx="753.8166666666667" cy="449.80" r="3.1" fill="#000" stroke="#f0f0f0" stroke-width="2.1"/>
<circle cx="770.8000000000001" cy="449.80" r="3.1" fill="#000" stroke="#f0f0f0" stroke-width="2.1"/>
<circle cx="787.7833333333334" cy="449.80" r="3.1" fill="#000" stroke="#f0f0f0" stroke-width="2.1"/>
<circle cx="804.7666666666667" cy="449.80" r="3.1" fill="#000" stroke="#f0f0f0" stroke-width="2.1"/>
<circle cx="821.75" cy="449.80" r="3.1" fill="#000" stroke="#f0f0f0" stroke-width="2.1"/>
<circle cx="838.7333333333333" cy="449.80" r="3.1" fill="#000" stroke="#f0f0f0" stroke-width="2.1"/>
<circle cx="855.7166666666667" cy="449.80" r="3.1" fill="#000" stroke="#f0f0f0" stroke-width="2.1"/>
<circle cx="872.7" cy="449.80" r="3.1" fill="#000" stroke="#f0f0f0" stroke-width="2.1"/>
<circle cx="889.6833333333334" cy="449.80" r="3.1" fill="#000" stroke="#f0f0f0" stroke-width="2.1"/>
<circle cx="906.6666666666667" cy="449.80" r="3.1" fill="#000" stroke="#f0f0f0" stroke-width="2.1"/>
<circle cx="1008.5666666666667" cy="449.80" r="3.1" fill="#000" stroke="#f0f0f0" stroke-width="2.1"/>
<circle cx="1025.5500000000002" cy="449.80" r="3.1" fill="#000" stroke="#f0f0f0" stroke-width="2.1"/>
<circle cx="1042.5333333333333" cy="449.80" r="3.1" fill="#000" stroke="#f0f0f0" stroke-width="2.1"/>
<circle cx="1059.5166666666669" cy="449.80" r="3.1" fill="#000" stroke="#f0f0f0" stroke-width="2.1"/>
<circle cx="57.5" cy="489.25" r="3.1" fill="#000" stroke="#f0f0f0" stroke-width="2.1"/>
<circle cx="74.48333333333333" cy="489.25" r="3.1" fill="#000" stroke="#f0f0f0" stroke-width="2.1"/>
<circle cx="91.46666666666667" cy="489.25" r="3.1" fill="#000" stroke="#f0f0f0" stroke-width="2.1"/>
<circle cx="108.45" cy="489.25" r="3.1" fill="#000" stroke="#f0f0f0" stroke-width="2.1"/>
<circle cx="125.43333333333334" cy="489.25" r="3.1" fill="#000" stroke="#f0f0f0" stroke-width="2.1"/>
<circle cx="142.41666666666669" cy="489.25" r="3.1" fill="#000" stroke="#f0f0f0" stroke-width="2.1"/>
<circle cx="159.4" cy="489.25" r="3.1" fill="#000" stroke="#f0f0f0" stroke-width="2.1"/>
<circle cx="176.38333333333333" cy="489.25" r="3.1" fill="#000" stroke="#f0f0f0" stroke-width="2.1"/>
<circle cx="193.36666666666667" cy="489.25" r="3.1" fill="#000" stroke="#f0f0f0" stroke-width="2.1"/>
<circle cx="210.35000000000002" cy="489.25" r="3.1" fill="#000" stroke="#f0f0f0" stroke-width="2.1"/>
<circle cx="227.33333333333334" cy="489.25" r="3.1" fill="#000" stroke="#f0f0f0" stroke-width="2.1"/>
<circle cx="244.31666666666666" cy="489.25" r="3.1" fill="#000" stroke="#f0f0f0" stroke-width="2.1"/>
<circle cx="261.3" cy="489.25" r="3.1" fill="#000" stroke="#f0f0f0" stroke-width="2.1"/>
<circle cx="278.28333333333336" cy="489.25" r="3.1" fill="#000" stroke="#f0f0f0" stroke-width="2.1"/>
<circle cx="295.26666666666665" cy="489.25" r="3.1" fill="#000" stroke="#f0f0f0" stroke-width="2.1"/>
<circle cx="312.25" cy="489.25" r="3.1" fill="#000" stroke="#f0f0f0" stroke-width="2.1"/>
<circle cx="329.23333333333335" cy="489.25" r="3.1" fill="#000" stroke="#f0f0f0" stroke-width="2.1"/>
<circle cx="346.2166666666667" cy="489.25" r="3.1" fill="#000" stroke="#f0f0f0" stroke-width="2.1"/>
<circle cx="363.20000000000005" cy="489.25" r="3.1" fill="#000" stroke="#f0f0f0" stroke-width="2.1"/>
<circle cx="380.18333333333334" cy="489.25" r="3.1" fill="#000" stroke="#f0f0f0" stroke-width="2.1"/>
<circle cx="397.1666666666667" cy="489.25" r="3.1" fill="#000" stroke="#f0f0f0" stroke-width="2.1"/>
<circle cx="414.15000000000003" cy="489.25" r="3.1" fill="#000" stroke="#f0f0f0" stroke-width="2.1"/>
<circle cx="431.1333333333333" cy="489.25" r="3.1" fill="#000" stroke="#f0f0f0" stroke-width="2.1"/>
<circle cx="448.1166666666667" cy="489.25" r="3.1" fill="#000" stroke="#f0f0f0" stroke-width="2.1"/>
<circle cx="465.1" cy="489.25" r="3.1" fill="#000" stroke="#f0f0f0" stroke-width="2.1"/>
<circle cx="482.08333333333337" cy="489.25" r="3.1" fill="#000" stroke="#f0f0f0" stroke-width="2.1"/>
<circle cx="499.0666666666667" cy="489.25" r="3.1" fill="#000" stroke="#f0f0f0" stroke-width="2.1"/>
<circle cx="516.05" cy="489.25" r="3.1" fill="#000" stroke="#f0f0f0" stroke-width="2.1"/>
<circle cx="533.0333333333333" cy="489.25" r="3.1" fill="#000" stroke="#f0f0f0" stroke-width="2.1"/>
<circle cx="550.0166666666667" cy="489.25" r="3.1" fill="#000" stroke="#f0f0f0" stroke-width="2.1"/>
<circle cx="567.0" cy="489.25" r="3.1" fill="#000" stroke="#f0f0f0" stroke-width="2.1"/>
<circle cx="583.9833333333333" cy="489.25" r="3.1" fill="#000" stroke="#f0f0f0" stroke-width="2.1"/>
<circle cx="600.9666666666667" cy="489.25" r="3.1" fill="#000" stroke="#f0f0f0" stroke-width="2.1"/>
<circle cx="617.95" cy="489.25" r="3.1" fill="#000" stroke="#f0f0f0" stroke-width="2.1"/>
<circle cx="634.9333333333334" cy="489.25" r="3.1" fill="#000" stroke="#f0f0f0" stroke-width="2.1"/>
<circle cx="651.9166666666667" cy="489.25" r="3.1" fill="#000" stroke="#f0f0f0" stroke-width="2.1"/>
<circle cx="668.9000000000001" cy="489.25" r="3.1" fill="#000" stroke="#f0f0f0" stroke-width="2.1"/>
<circle cx="685.8833333333333" cy="489.25" r="3.1" fill="#000" stroke="#f0f0f0" stroke-width="2.1"/>
<circle cx="702.8666666666667" cy="489.25" r="3.1" fill="#000" stroke="#f0f0f0" stroke-width="2.1"/>
<circle cx="719.85" cy="489.25" r="3.1" fill="#000" stroke="#f0f0f0" stroke-width="2.1"/>
<circle cx="736.8333333333334" cy="489.25" r="3.1" fill="#000" stroke="#f0f0f0" stroke-width="2.1"/>
<circle cx="753.8166666666667" cy="489.25" r="3.1" fill="#000" stroke="#f0f0f0" stroke-width="2.1"/>
<circle cx="770.8000000000001" cy="489.25" r="3.1" fill="#000" stroke="#f0f0f0" stroke-width="2.1"/>
<circle cx="787.7833333333334" cy="489.25" r="3.1" fill="#000" stroke="#f0f0f0" stroke-width="2.1"/>
<circle cx="804.7666666666667" cy="489.25" r="3.1" fill="#000" stroke="#f0f0f0" stroke-width="2.1"/>
<circle cx="821.75" cy="489.25" r="3.1" fill="#000" stroke="#f0f0f0" stroke-width="2.1"/>
<circle cx="838.7333333333333" cy="489.25" r="3.1" fill="#000" stroke="#f0f0f0" stroke-width="2.1"/>
<circle cx="855.7166666666667" cy="489.25" r="3.1" fill="#000" stroke="#f0f0f0" stroke-width="2.1"/>
<circle cx="872.7" cy="489.25" r="3.1" fill="#000" stroke="#f0f0f0" stroke-width="2.1"/>
<circle cx="889.6833333333334" cy="489.25" r="3.1" fill="#000" stroke="#f0f0f0" stroke-width="2.1"/>
<circle cx="906.6666666666667" cy="489.25" r="3.1" fill="#000" stroke="#f0f0f0" stroke-width="2.1"/>
<circle cx="923.6500000000001" cy="489.25" r="3.1" fill="#000" stroke="#f0f0f0" stroke-width="2.1"/>
<circle cx="940.6333333333334" cy="489.25" r="3.1" fill="#000" stroke="#f0f0f0" stroke-width="2.1"/>
<circle cx="957.6166666666667" cy="489.25" r="3.1" fill="#000" stroke="#f0f0f0" stroke-width="2.1"/>
<circle cx="974.6" cy="489.25" r="3.1" fill="#000" stroke="#f0f0f0" stroke-width="2.1"/>
<circle cx="991.5833333333334" cy="489.25" r="3.1" fill="#000" stroke="#f0f0f0" stroke-width="2.1"/>
<circle cx="1008.5666666666667" cy="489.25" r="3.1" fill="#000" stroke="#f0f0f0" stroke-width="2.1"/>
<circle cx="1025.5500000000002" cy="489.25" r="3.1" fill="#000" stroke="#f0f0f0" stroke-width="2.1"/>
<circle cx="1042.5333333333333" cy="489.25" r="3.1" fill="#000" stroke="#f0f0f0" stroke-width="2.1"/>
<circle cx="1059.5166666666669" cy="489.25" r="3.1" fill="#000" stroke="#f0f0f0" stroke-width="2.1"/>
<circle cx="57.5" cy="528.70" r="3.1" fill="#000" stroke="#f0f0f0" stroke-width="2.1"/>
<circle cx="74.48333333333333" cy="528.70" r="3.1" fill="#000" stroke="#f0f0f0" stroke-width="2.1"/>
<circle cx="91.46666666666667" cy="528.70" r="3.1" fill="#000" stroke="#f0f0f0" stroke-width="2.1"/>
<circle cx="108.45" cy="528.70" r="3.1" fill="#000" stroke="#f0f0f0" stroke-width="2.1"/>
<circle cx="125.43333333333334" cy="528.70" r="3.1" fill="#000" stroke="#f0f0f0" stroke-width="2.1"/>
<circle cx="142.41666666666669" cy="528.70" r="3.1" fill="#000" stroke="#f0f0f0" stroke-width="2.1"/>
<circle cx="159.4" cy="528.70" r="3.1" fill="#000" stroke="#f0f0f0" stroke-width="2.1"/>
<circle cx="176.38333333333333" cy="528.70" r="3.1" fill="#000" stroke="#f0f0f0" stroke-width="2.1"/>
<circle cx="193.36666666666667" cy="528.70" r="3.1" fill="#000" stroke="#f0f0f0" stroke-width="2.1"/>
<circle cx="210.35000000000002" cy="528.70" r="3.1" fill="#000" stroke="#f0f0f0" stroke-width="2.1"/>
<circle cx="227.33333333333334" cy="528.70" r="3.1" fill="#000" stroke="#f0f0f0" stroke-width="2.1"/>
<circle cx="244.31666666666666" cy="528.70" r="3.1" fill="#000" stroke="#f0f0f0" stroke-width="2.1"/>
<circle cx="261.3" cy="528.70" r="3.1" fill="#000" stroke="#f0f0f0" stroke-width="2.1"/>
<circle cx="278.28333333333336" cy="528.70" r="3.1" fill="#000" stroke="#f0f0f0" stroke-width="2.1"/>
<circle cx="295.26666666666665" cy="528.70" r="3.1" fill="#000" stroke="#f0f0f0" stroke-width="2.1"/>
<circle cx="312.25" cy="528.70" r="3.1" fill="#000" stroke="#f0f0f0" stroke-width="2.1"/>
<circle cx="329.23333333333335" cy="528.70" r="3.1" fill="#000" stroke="#f0f0f0" stroke-width="2.1"/>
<circle cx="346.2166666666667" cy="528.70" r="3.1" fill="#000" stroke="#f0f0f0" stroke-width="2.1"/>
<circle cx="363.20000000000005" cy="528.70" r="3.1" fill="#000" stroke="#f0f0f0" stroke-width="2.1"/>
<circle cx="380.18333333333334" cy="528.70" r="3.1" fill="#000" stroke="#f0f0f0" stroke-width="2.1"/>
<circle cx="397.1666666666667" cy="528.70" r="3.1" fill="#000" stroke="#f0f0f0" stroke-width="2.1"/>
<circle cx="414.15000000000003" cy="528.70" r="3.1" fill="#000" stroke="#f0f0f0" stroke-width="2.1"/>
<circle cx="431.1333333333333" cy="528.70" r="3.1" fill="#000" stroke="#f0f0f0" stroke-width="2.1"/>
<circle cx="448.1166666666667" cy="528.70" r="3.1" fill="#000" stroke="#f0f0f0" stroke-width="2.1"/>
<circle cx="465.1" cy="528.70" r="3.1" fill="#000" stroke="#f0f0f0" stroke-width="2.1"/>
<circle cx="482.08333333333337" cy="528.70" r="3.1" fill="#000" stroke="#f0f0f0" stroke-width="2.1"/>
<circle cx="499.0666666666667" cy="528.70" r="3.1" fill="#000" stroke="#f0f0f0" stroke-width="2.1"/>
<circle cx="516.05" cy="528.70" r="3.1" fill="#000" stroke="#f0f0f0" stroke-width="2.1"/>
<circle cx="533.0333333333333" cy="528.70" r="3.1" fill="#000" stroke="#f0f0f0" stroke-width="2.1"/>
<circle cx="550.0166666666667" cy="528.70" r="3.1" fill="#000" stroke="#f0f0f0" stroke-width="2.1"/>
<circle cx="567.0" cy="528.70" r="3.1" fill="#000" stroke="#f0f0f0" stroke-width="2.1"/>
<circle cx="583.9833333333333" cy="528.70" r="3.1" fill="#000" stroke="#f0f0f0" stroke-width="2.1"/>
<circle cx="600.9666666666667" cy="528.70" r="3.1" fill="#000" stroke="#f0f0f0" stroke-width="2.1"/>
<circle cx="617.95" cy="528.70" r="3.1" fill="#000" stroke="#f0f0f0" stroke-width="2.1"/>
<circle cx="634.9333333333334" cy="528.70" r="3.1" fill="#000" stroke="#f0f0f0" stroke-width="2.1"/>
<circle cx="651.9166666666667" cy="528.70" r="3.1" fill="#000" stroke="#f0f0f0" stroke-width="2.1"/>
<circle cx="668.9000000000001" cy="528.70" r="3.1" fill="#000" stroke="#f0f0f0" stroke-width="2.1"/>
<circle cx="685.8833333333333" cy="528.70" r="3.1" fill="#000" stroke="#f0f0f0" stroke-width="2.1"/>
<circle cx="702.8666666666667" cy="528.70" r="3.1" fill="#000" stroke="#f0f0f0" stroke-width="2.1"/>
<circle cx="719.85" cy="528.70" r="3.1" fill="#000" stroke="#f0f0f0" stroke-width="2.1"/>
<circle cx="736.8333333333334" cy="528.70" r="3.1" fill="#000" stroke="#f0f0f0" stroke-width="2.1"/>
<circle cx="753.8166666666667" cy="528.70" r="3.1" fill="#000" stroke="#f0f0f0" stroke-width="2.1"/>
<circle cx="770.8000000000001" cy="528.70" r="3.1" fill="#000" stroke="#f0f0f0" stroke-width="2.1"/>
<circle cx="787.7833333333334" cy="528.70" r="3.1" fill="#000" stroke="#f0f0f0" stroke-width="2.1"/>
<circle cx="804.7666666666667" cy="528.70" r="3.1" fill="#000" stroke="#f0f0f0" stroke-width="2.1"/>
<circle cx="821.75" cy="528.70" r="3.1" fill="#000" stroke="#f0f0f0" stroke-width="2.1"/>
<circle cx="838.7333333333333" cy="528.70" r="3.1" fill="#000" stroke="#f0f0f0" stroke-width="2.1"/>
<circle cx="855.7166666666667" cy="528.70" r="3.1" fill="#000" stroke="#f0f0f0" stroke-width="2.1"/>
<circle cx="872.7" cy="528.70" r="3.1" fill="#000" stroke="#f0f0f0" stroke-width="2.1"/>
<circle cx="889.6833333333334" cy="528.70" r="3.1" fill="#000" stroke="#f0f0f0" stroke-width="2.1"/>
<circle cx="906.6666666666667" cy="528.70" r="3.1" fill="#000" stroke="#f0f0f0" stroke-width="2.1"/>
<circle cx="923.6500000000001" cy="528.70" r="3.1" fill="#000" stroke="#f0f0f0" stroke-width="2.1"/>
<circle cx="940.6333333333334" cy="528.70" r="3.1" fill="#000" stroke="#f0f0f0" stroke-width="2.1"/>
<circle cx="957.6166666666667" cy="528.70" r="3.1" fill="#000" stroke="#f0f0f0" stroke-width="2.1"/>
<circle cx="974.6" cy="528.70" r="3.1" fill="#000" stroke="#f0f0f0" stroke-width="2.1"/>
<circle cx="991.5833333333334" cy="528.70" r="3.1" fill="#000" stroke="#f0f0f0" stroke-width="2.1"/>
<circle cx="1008.5666666666667" cy="528.70" r="3.1" fill="#000" stroke="#f0f0f0" stroke-width="2.1"/>
<circle cx="1025.5500000000002" cy="528.70" r="3.1" fill="#000" stroke="#f0f0f0" stroke-width="2.1"/>
<circle cx="1042.5333333333333" cy="528.70" r="3.1" fill="#000" stroke="#f0f0f0" stroke-width="2.1"/>
<circle cx="1059.5166666666669" cy="528.70" r="3.1" fill="#000" stroke="#f0f0f0" stroke-width="2.1"/>
<circle cx="57.5" cy="568.15" r="3.1" fill="#000" stroke="#f0f0f0" stroke-width="2.1"/>
<circle cx="210.35000000000002" cy="568.15" r="3.1" fill="#000" stroke="#f0f0f0" stroke-width="2.1"/>
<circle cx="227.33333333333334" cy="568.15" r="3.1" fill="#000" stroke="#f0f0f0" stroke-width="2.1"/>
<circle cx="278.28333333333336" cy="568.15" r="3.1" fill="#000" stroke="#f0f0f0" stroke-width="2.1"/>
<circle cx="295.26666666666665" cy="568.15" r="3.1" fill="#000" stroke="#f0f0f0" stroke-width="2.1"/>
<circle cx="312.25" cy="568.15" r="3.1" fill="#000" stroke="#f0f0f0" stroke-width="2.1"/>
<circle cx="329.23333333333335" cy="568.15" r="3.1" fill="#000" stroke="#f0f0f0" stroke-width="2.1"/>
<circle cx="346.2166666666667" cy="568.15" r="3.1" fill="#000" stroke="#f0f0f0" stroke-width="2.1"/>
<circle cx="363.20000000000005" cy="568.15" r="3.1" fill="#000" stroke="#f0f0f0" stroke-width="2.1"/>
<circle cx="380.18333333333334" cy="568.15" r="3.1" fill="#000" stroke="#f0f0f0" stroke-width="2.1"/>
<circle cx="397.1666666666667" cy="568.15" r="3.1" fill="#000" stroke="#f0f0f0" stroke-width="2.1"/>
<circle cx="414.15000000000003" cy="568.15" r="3.1" fill="#000" stroke="#f0f0f0" stroke-width="2.1"/>
<circle cx="431.1333333333333" cy="568.15" r="3.1" fill="#000" stroke="#f0f0f0" stroke-width="2.1"/>
<circle cx="448.1166666666667" cy="568.15" r="3.1" fill="#000" stroke="#f0f0f0" stroke-width="2.1"/>
<circle cx="465.1" cy="568.15" r="3.1" fill="#000" stroke="#f0f0f0" stroke-width="2.1"/>
<circle cx="482.08333333333337" cy="568.15" r="3.1" fill="#000" stroke="#f0f0f0" stroke-width="2.1"/>
<circle cx="499.0666666666667" cy="568.15" r="3.1" fill="#000" stroke="#f0f0f0" stroke-width="2.1"/>
<circle cx="516.05" cy="568.15" r="3.1" fill="#000" stroke="#f0f0f0" stroke-width="2.1"/>
<circle cx="533.0333333333333" cy="568.15" r="3.1" fill="#000" stroke="#f0f0f0" stroke-width="2.1"/>
<circle cx="550.0166666666667" cy="568.15" r="3.1" fill="#000" stroke="#f0f0f0" stroke-width="2.1"/>
<circle cx="567.0" cy="568.15" r="3.1" fill="#000" stroke="#f0f0f0" stroke-width="2.1"/>
<circle cx="583.9833333333333" cy="568.15" r="3.1" fill="#000" stroke="#f0f0f0" stroke-width="2.1"/>
<circle cx="600.9666666666667" cy="568.15" r="3.1" fill="#000" stroke="#f0f0f0" stroke-width="2.1"/>
<circle cx="617.95" cy="568.15" r="3.1" fill="#000" stroke="#f0f0f0" stroke-width="2.1"/>
<circle cx="634.9333333333334" cy="568.15" r="3.1" fill="#000" stroke="#f0f0f0" stroke-width="2.1"/>
<circle cx="651.9166666666667" cy="568.15" r="3.1" fill="#000" stroke="#f0f0f0" stroke-width="2.1"/>
<circle cx="668.9000000000001" cy="568.15" r="3.1" fill="#000" stroke="#f0f0f0" stroke-width="2.1"/>
<circle cx="685.8833333333333" cy="568.15" r="3.1" fill="#000" stroke="#f0f0f0" stroke-width="2.1"/>
<circle cx="702.8666666666667" cy="568.15" r="3.1" fill="#000" stroke="#f0f0f0" stroke-width="2.1"/>
<circle cx="719.85" cy="568.15" r="3.1" fill="#000" stroke="#f0f0f0" stroke-width="2.1"/>
<circle cx="736.8333333333334" cy="568.15" r="3.1" fill="#000" stroke="#f0f0f0" stroke-width="2.1"/>
<circle cx="753.8166666666667" cy="568.15" r="3.1" fill="#000" stroke="#f0f0f0" stroke-width="2.1"/>
<circle cx="770.8000000000001" cy="568.15" r="3.1" fill="#000" stroke="#f0f0f0" stroke-width="2.1"/>
<circle cx="787.7833333333334" cy="568.15" r="3.1" fill="#000" stroke="#f0f0f0" stroke-width="2.1"/>
<circle cx="804.7666666666667" cy="568.15" r="3.1" fill="#000" stroke="#f0f0f0" stroke-width="2.1"/>
<circle cx="821.75" cy="568.15" r="3.1" fill="#000" stroke="#f0f0f0" stroke-width="2.1"/>
<circle cx="838.7333333333333" cy="568.15" r="3.1" fill="#000" stroke="#f0f0f0" stroke-width="2.1"/>
<circle cx="855.7166666666667" cy="568.15" r="3.1" fill="#000" stroke="#f0f0f0" stroke-width="2.1"/>
<circle cx="872.7" cy="568.15" r="3.1" fill="#000" stroke="#f0f0f0" stroke-width="2.1"/>
<circle cx="889.6833333333334" cy="568.15" r="3.1" fill="#000" stroke="#f0f0f0" stroke-width="2.1"/>
<circle cx="906.6666666666667" cy="568.15" r="3.1" fill="#000" stroke="#f0f0f0" stroke-width="2.1"/>
<circle cx="923.6500000000001" cy="568.15" r="3.1" fill="#000" stroke="#f0f0f0" stroke-width="2.1"/>
<circle cx="940.6333333333334" cy="568.15" r="3.1" fill="#000" stroke="#f0f0f0" stroke-width="2.1"/>
<circle cx="957.6166666666667" cy="568.15" r="3.1" fill="#000" stroke="#f0f0f0" stroke-width="2.1"/>
<circle cx="974.6" cy="568.15" r="3.1" fill="#000" stroke="#f0f0f0" stroke-width="2.1"/>
<circle cx="991.5833333333334" cy="568.15" r="3.1" fill="#000" stroke="#f0f0f0" stroke-width="2.1"/>
<circle cx="1008.5666666666667" cy="568.15" r="3.1" fill="#000" stroke="#f0f0f0" stroke-width="2.1"/>
<circle cx="1025.5500000000002" cy="568.15" r="3.1" fill="#000" stroke="#f0f0f0" stroke-width="2.1"/>
<circle cx="1042.5333333333333" cy="568.15" r="3.1" fill="#000" stroke="#f0f0f0" stroke-width="2.1"/>
<circle cx="1059.5166666666669" cy="568.15" r="3.1" fill="#000" stroke="#f0f0f0" stroke-width="2.1"/>
<circle cx="57.5" cy="607.60" r="3.1" fill="#000" stroke="#f0f0f0" stroke-width="2.1"/>
<circle cx="74.48333333333333" cy="607.60" r="3.1" fill="#000" stroke="#f0f0f0" stroke-width="2.1"/>
<circle cx="91.46666666666667" cy="607.60" r="3.1" fill="#000" stroke="#f0f0f0" stroke-width="2.1"/>
<circle cx="108.45" cy="607.60" r="3.1" fill="#000" stroke="#f0f0f0" stroke-width="2.1"/>
<circle cx="125.43333333333334" cy="607.60" r="3.1" fill="#000" stroke="#f0f0f0" stroke-width="2.1"/>
<circle cx="142.41666666666669" cy="607.60" r="3.1" fill="#000" stroke="#f0f0f0" stroke-width="2.1"/>
<circle cx="159.4" cy="607.60" r="3.1" fill="#000" stroke="#f0f0f0" stroke-width="2.1"/>
<circle cx="176.38333333333333" cy="607.60" r="3.1" fill="#000" stroke="#f0f0f0" stroke-width="2.1"/>
<circle cx="193.36666666666667" cy="607.60" r="3.1" fill="#000" stroke="#f0f0f0" stroke-width="2.1"/>
<circle cx="210.35000000000002" cy="607.60" r="3.1" fill="#000" stroke="#f0f0f0" stroke-width="2.1"/>
<circle cx="227.33333333333334" cy="607.60" r="3.1" fill="#000" stroke="#f0f0f0" stroke-width="2.1"/>
<circle cx="244.31666666666666" cy="607.60" r="3.1" fill="#000" stroke="#f0f0f0" stroke-width="2.1"/>
<defs><linearGradient id="gck" x1="0" x2="1" y1="0" y2="0"><stop offset="0" stop-color="#1fae58"/><stop offset="0.5" stop-color="#28b45e"/><stop offset="0.52" stop-color="#48c468"/><stop offset="1" stop-color="#58cf70"/></linearGradient><linearGradient id="gck2" x1="0" x2="1" y1="0" y2="0"><stop offset="0" stop-color="#1a7a38"/><stop offset="0.5" stop-color="#1c7a3a"/><stop offset="0.52" stop-color="#2a7640"/><stop offset="1" stop-color="#2b7442"/></linearGradient></defs>
</g>
<rect x="56.5" y="237" width="1.5" height="492" fill="#7a7a7a"/><rect x="1076.5" y="237" width="1.5" height="492" fill="#555"/>
<g><circle cx="57.5" cy="274.9" r="10.6" fill="#2db863" stroke="#f2f2f2" stroke-width="1.5"/><circle cx="57.5" cy="271.5" r="3.35" fill="#fff"/><path d="M51.2 281.0C51.2 277.9 54.0 276.5 57.5 276.5C61.0 276.5 63.8 277.9 63.8 281.0Z" fill="#fff"/></g>
<g><circle cx="650.5" cy="275" r="10.7" fill="url(#gck)" stroke="#f2f2f2" stroke-width="1.5"/><path d="M643.3 271.5h8.6M643.3 274.6h8.6M643.3 277.8h5.6" stroke="#fff" stroke-width="1.35"/><path d="M650.8 278.4L653.7 280.8L658.8 275.8" stroke="#fff" stroke-width="1.6" fill="none"/></g>
<g><circle cx="819.4" cy="353" r="10.7" fill="url(#gck)" stroke="#f2f2f2" stroke-width="1.5"/><path d="M812.1999999999999 349.5h8.6M812.1999999999999 352.6h8.6M812.1999999999999 355.8h5.6" stroke="#fff" stroke-width="1.35"/><path d="M819.6999999999999 356.4L822.6 358.8L827.6999999999999 353.8" stroke="#fff" stroke-width="1.6" fill="none"/></g>
<g><circle cx="1006.7" cy="432.5" r="10.7" fill="url(#gck)" stroke="#f2f2f2" stroke-width="1.5"/><path d="M999.5 429.0h8.6M999.5 432.1h8.6M999.5 435.3h5.6" stroke="#fff" stroke-width="1.35"/><path d="M1007.0 435.9L1009.9000000000001 438.3L1015.0 433.3" stroke="#fff" stroke-width="1.6" fill="none"/></g>
<g><circle cx="176.7" cy="549.9" r="10.7" fill="url(#gck2)" stroke="#f2f2f2" stroke-width="1.5"/><path d="M169.5 546.4h8.6M169.5 549.5h8.6M169.5 552.6999999999999h5.6" stroke="#fff" stroke-width="1.35"/><path d="M177.0 553.3L179.89999999999998 555.6999999999999L185.0 550.6999999999999" stroke="#fff" stroke-width="1.6" fill="none"/></g>
<rect x="573.3" y="151.3" width="431.5" height="1.2" fill="#4a4a4a"/>
<rect x="573.3" y="161.1" width="431.5" height="1.2" fill="#4a4a4a"/>
<rect x="573.3" y="170.9" width="431.5" height="1.2" fill="#4a4a4a"/>
<rect x="573.3" y="180.6" width="431.5" height="1.2" fill="#4a4a4a"/>
<rect x="573.3" y="190.4" width="431.5" height="1.2" fill="#4a4a4a"/>
<rect x="573.3" y="200" width="431.5" height="1.8" fill="#b0b0b0"/>
<rect x="595.70" y="157.7" width="14.6" height="43.10" fill="#fff"/>
<rect x="632.15" y="154.6" width="14.6" height="46.20" fill="#fff"/>
<rect x="668.60" y="155.5" width="14.6" height="45.30" fill="#fff"/>
<rect x="705.05" y="157" width="14.6" height="43.80" fill="#fff"/>
<rect x="741.50" y="156" width="14.6" height="44.80" fill="#fff"/>
<rect x="777.95" y="154.6" width="14.6" height="46.20" fill="#fff"/>
<rect x="814.40" y="155" width="14.6" height="45.80" fill="#fff"/>
<rect x="850.85" y="160.2" width="14.6" height="40.60" fill="#fff"/>
<rect x="887.30" y="157.7" width="14.6" height="43.10" fill="#fff"/>
<rect x="602.40" y="201" width="1.2" height="6.5" fill="#888"/>
<rect x="638.85" y="201" width="1.2" height="6.5" fill="#888"/>
<rect x="675.30" y="201" width="1.2" height="6.5" fill="#888"/>
<rect x="711.75" y="201" width="1.2" height="6.5" fill="#888"/>
<rect x="748.20" y="201" width="1.2" height="6.5" fill="#888"/>
<rect x="784.65" y="201" width="1.2" height="6.5" fill="#888"/>
<rect x="821.10" y="201" width="1.2" height="6.5" fill="#888"/>
<rect x="857.55" y="201" width="1.2" height="6.5" fill="#888"/>
<rect x="894.00" y="201" width="1.2" height="6.5" fill="#888"/>
<rect x="930.45" y="201" width="1.2" height="6.5" fill="#888"/>
<rect x="966.90" y="201" width="1.2" height="6.5" fill="#888"/>
<rect x="1003.35" y="201" width="1.2" height="6.5" fill="#888"/>
<path d="M603 152.4 L894 152.4 C904 152.4 906 160 913 175 C921 192 925 201 933 201 L1004.6 201" stroke="#e58a19" stroke-width="2" fill="none"/>
<path d="M603.0 157.7 C609.1 157.2 627.3 155.0 639.5 154.6 C651.6 154.2 663.8 154.9 675.9 155.2 C688.0 155.5 700.2 156.5 712.4 156.6 C724.5 156.7 736.6 156.1 748.8 155.8 C760.9 155.5 773.1 154.7 785.2 154.6 C797.4 154.5 809.6 154.3 821.7 155.0 C833.9 155.7 846.0 158.9 858.2 159.0 C870.3 159.1 888.5 156.2 894.6 155.6 C902 155.6 903 162 910 176 C918 192 922 201 930 201 L1004.6 201" stroke="#f0e200" stroke-width="1.8" fill="none"/>
<path d="M603 152 L830 152.6 C850 153 872 155 886 155 C897 155 901 162 908 176 C916 192 920 201 928 201 L1004.6 201" stroke="#2bc15a" stroke-width="2" fill="none"/>
<rect x="19.2" y="16.5" width="12.6" height="10" rx="2" fill="none" stroke="#bbb" stroke-width="1.2"/><line x1="24" y1="16.5" x2="24" y2="26.5" stroke="#bbb" stroke-width="1.2"/><line x1="21.3" y1="19" x2="21.3" y2="22" stroke="#bbb" stroke-width="0.9"/>
<path d="M51 21.8h10.5M55.5 17.3L51 21.8l4.5 4.5" stroke="#c8c8c8" stroke-width="1.3" fill="none"/>
<path d="M92 21.8H81.5M87.5 17.3l4.5 4.5-4.5 4.5" stroke="#555" stroke-width="1.3" fill="none"/>
<path d="M121 22a4.8 4.8 0 1 1-2-4.2" stroke="#c8c8c8" stroke-width="1.3" fill="none"/><path d="M116.5 15.5l3.3 2.4-2.6 3" stroke="#c8c8c8" stroke-width="1.3" fill="none"/>
<g transform="rotate(-45 545.5 22)"><rect x="539" y="19.5" width="7.5" height="5" rx="2.5" fill="none" stroke="#bbb" stroke-width="1.2"/><rect x="544.5" y="19.5" width="7.5" height="5" rx="2.5" fill="none" stroke="#bbb" stroke-width="1.2"/></g>
<circle cx="1055.9" cy="21.5" r="6.2" fill="#1a8cff" stroke="#fff" stroke-width="1.3"/><circle cx="1055.9" cy="21.5" r="3.6" fill="#fff"/><rect x="1055.1" y="19" width="1.6" height="5" fill="#111"/>
<circle cx="1085.7" cy="21.5" r="7" fill="#5a5ae6"/><path d="M1088 17.6L1088 24.8L1084.9 21.9Z" fill="#fff"/><rect x="1082.6" y="23.3" width="1.6" height="1.6" fill="#fff"/>
<rect x="1108.8" y="14.5" width="9" height="9" fill="#777" stroke="#888" stroke-width="1"/><rect x="1111.5" y="17.5" width="9.5" height="9.5" fill="#000" stroke="#999" stroke-width="1.1"/><rect x="1112.5" y="18.5" width="5.5" height="5.5" fill="#888"/>
<rect x="1138.8" y="15" width="12.4" height="12.6" rx="4" fill="none" stroke="#aaa" stroke-width="1.2"/><path d="M1141.5 19.7h6.8M1141.5 23h6.8" stroke="#999" stroke-width="0.9"/><circle cx="1145.4" cy="19.7" r="1.3" fill="#999"/><circle cx="1143.4" cy="23" r="1.3" fill="#999"/>
<rect x="1168.8" y="15.5" width="11.5" height="11.5" rx="1.5" fill="none" stroke="#bbb" stroke-width="1.2"/><line x1="1174.5" y1="15.5" x2="1174.5" y2="27" stroke="#bbb" stroke-width="1.2"/>
<circle cx="40.8" cy="60.8" r="17.2" fill="#0a1a10"/><rect x="35.3" y="55" width="11.7" height="1.7" rx="0.8" fill="#22b35c"/><rect x="35.3" y="60.4" width="7.7" height="1.7" rx="0.8" fill="#dc8a2a"/><rect x="35.3" y="65.5" width="11.7" height="1.7" rx="0.8" fill="#22b35c"/>
<path d="M90.5 57l-4.5 4.4 4.5 4.4" stroke="#fff" stroke-width="1.8" fill="none"/><path d="M117.5 57l4.5 4.4-4.5 4.4" stroke="#fff" stroke-width="1.8" fill="none"/>
<path d="M554.5 56.5l-5 4.6 5 4.6" stroke="#fff" stroke-width="1.7" fill="none"/><path d="M582 56.5l5 4.6-5 4.6" stroke="#777" stroke-width="1.5" fill="none"/><path d="M612.5 57l4.5 4.1-4.5 4.1M621.8 56.5v9" stroke="#888" stroke-width="1.5" fill="none"/>
<circle cx="503.5" cy="144" r="6.5" fill="none" stroke="#bbb" stroke-width="1.2"/><rect x="502.9" y="142.6" width="1.3" height="4.6" fill="#bbb"/><circle cx="503.55" cy="140.9" r="0.8" fill="#bbb"/>
<circle cx="1134.3" cy="247.6" r="6.3" fill="none" stroke="#aaa" stroke-width="1.2"/><rect x="1133.7" y="246.3" width="1.3" height="4.5" fill="#aaa"/><circle cx="1134.35" cy="244.5" r="0.8" fill="#aaa"/>
<rect x="1159.6999999999998" y="52.5" width="4.8" height="4" rx="0.8" fill="#fff" transform="rotate(0 1162.1 61.0)"/><rect x="1159.6999999999998" y="52.5" width="4.8" height="4" rx="0.8" fill="#fff" transform="rotate(60 1162.1 61.0)"/><rect x="1159.6999999999998" y="52.5" width="4.8" height="4" rx="0.8" fill="#fff" transform="rotate(120 1162.1 61.0)"/><rect x="1159.6999999999998" y="52.5" width="4.8" height="4" rx="0.8" fill="#fff" transform="rotate(180 1162.1 61.0)"/><rect x="1159.6999999999998" y="52.5" width="4.8" height="4" rx="0.8" fill="#fff" transform="rotate(240 1162.1 61.0)"/><rect x="1159.6999999999998" y="52.5" width="4.8" height="4" rx="0.8" fill="#fff" transform="rotate(300 1162.1 61.0)"/><circle cx="1162.1" cy="61.0" r="6.3" fill="#fff"/><circle cx="1162.1" cy="61.0" r="2.7" fill="#000"/>
<g>
<path d="M1078 191 C1074 191 1071.5 193.5 1071.3 197.5 M1132.8 191 C1136.8 191 1139.3 193.5 1139.5 197.5" stroke="#1e1e1e" stroke-width="2" fill="none"/>
<path d="M1077.4 188 H1133.5 V203.5 C1133.5 208.5 1130 210.3 1125 210.3 H1086 C1081 210.3 1077.4 208.5 1077.4 203.5 Z" fill="#1e1e1e"/>
<path d="M1077.1 190 V168 C1077.1 149 1088 141.9 1105.6 141.9 C1123.2 141.9 1134.1 149 1134.1 168 V190 Z" fill="#ffc30d"/>
<path d="M1121 144 C1129.5 147.5 1134.1 155 1134.1 168 V190 H1130.5 V168 C1130.5 157 1127.5 149.5 1121 144Z" fill="#e8aa00" opacity="0.5"/>
<circle cx="1071.2" cy="200.4" r="3.9" fill="#ffc30d"/><circle cx="1139.6" cy="200.4" r="3.9" fill="#ffc30d"/>
<rect x="1093.4" y="209" width="2.6" height="8.5" fill="#1e1e1e"/><rect x="1115.4" y="209" width="2.6" height="8.5" fill="#1e1e1e"/>
<rect x="1091.3" y="216.3" width="7" height="2.4" rx="1.2" fill="#1e1e1e"/><rect x="1113.3" y="216.3" width="7" height="2.4" rx="1.2" fill="#1e1e1e"/>
<circle cx="1097" cy="163.4" r="2.5" fill="#222"/><circle cx="1115.6" cy="163.4" r="2.5" fill="#222"/>
<path d="M1098.2 179.6 Q1106.6 185 1115 179.6" stroke="#222" stroke-width="1.8" fill="none" stroke-linecap="round"/>
<rect x="1084.5" y="196.8" width="4.5" height="1" fill="#2ecc71"/><rect x="1084.5" y="199.2" width="3.4" height="1" fill="#e0861c"/><rect x="1084.5" y="201.6" width="4.5" height="1" fill="#2ecc71"/>
<text x="1091.2" y="202.7" font-family="Liberation Sans" font-size="10.6" fill="#dcdcdc" textLength="35.3" lengthAdjust="spacingAndGlyphs">evocon</text>
</g>
<path d="M62.6 746.3C62.6 743.5 64.3 742.2 66.8 742.2C69.3 742.2 71 743.5 71 746.3Z" fill="#fff"/><rect x="66.1" y="740.8" width="1.4" height="3" fill="#fff"/><rect x="62" y="746" width="9.6" height="1.1" fill="#ccc"/><path d="M64.4 747.2H69.2C69.2 749.3 68.2 750.7 66.8 750.7C65.4 750.7 64.4 749.3 64.4 747.2Z" fill="#fff"/><path d="M59.8 757.8V755.5C59.8 753 62.5 751.6 66.8 751.6C71.1 751.6 73.8 753 73.8 755.5V757.8Z" fill="#fff"/>
<path d="M262.2 752.8A6.3 6.3 0 0 1 268.3 743.7M273.6 747.2A6.3 6.3 0 0 1 267.5 756.3" stroke="#eee" stroke-width="1.8" fill="none"/><path d="M267.8 740.6L271.9 744L267.8 747.4Z" fill="#eee"/><path d="M268 752.9L263.9 756.3L268 759.7Z" fill="#eee"/>
<circle cx="503" cy="750" r="7.7" fill="none" stroke="#eee" stroke-width="1.6"/><path d="M500.3 747.8a2.7 2.7 0 1 1 3.8 2.4c-.8.4-1.1.9-1.1 1.7v.6" stroke="#eee" stroke-width="1.6" fill="none"/><circle cx="503" cy="754.7" r="1" fill="#eee"/>
<path d="M670.6 756.4A7.4 7.4 0 0 1 668.6 746.6" stroke="#eee" stroke-width="1.8" fill="none"/><path d="M673 743.3A7.4 7.4 0 0 1 680.9 756.4" stroke="#eee" stroke-width="1.8" fill="none"/><path d="M669.2 744.2L677.5 749.6A2.4 2.4 0 0 1 674 752.9Z" fill="#eee"/><circle cx="770" cy="750.7" r="8.2" fill="#f0e000"/>
<circle cx="872.7" cy="750.5" r="7.7" fill="none" stroke="#eee" stroke-width="1.6"/><rect x="868.5" y="749.7" width="8.4" height="1.7" fill="#eee"/>
<path d="M1023 745.9h9M1023 749.1h9M1023 752.4h5.5" stroke="#eee" stroke-width="2"/><path d="M1030.6 752.5L1033.4 755.3L1038.8 750" stroke="#eee" stroke-width="2" fill="none"/>
<rect x="1163.2" y="742.9" width="17.5" height="13.9" rx="2.2" fill="#fff"/><path d="M1165.6 745.9L1172 749.8L1178.3 745.9" stroke="#1a1a1a" stroke-width="1.6" fill="none"/>
</svg>

<!-- tooltip -->
<div class="abs" style="left:70.7px;top:417.8px;width:210.8px;height:111px;background:rgba(12,12,12,0.9)"></div>
<div class="abs" style="left:84px;top:434.8px;width:7px;height:7px;border-radius:50%;background:#2ecc71"></div>
<div class="t" style="left:143.30px;top:47.22px;font-size:8.24px;font-weight:400;color:#a8a8a8;transform:scaleX(0.9197);">STATION</div>
<div class="t" style="left:143.70px;top:59.95px;font-size:13.41px;font-weight:700;color:#eeeeee;transform:scaleX(0.9769);-webkit-text-stroke:0.35px #000;">P15 248</div>
<div class="t" style="left:21.70px;top:82.67px;font-size:8.66px;font-weight:400;color:#a8a8a8;transform:scaleX(0.8912);">SHIFT QUANTITY</div>
<div class="t" style="left:22.50px;top:93.70px;font-size:26.82px;font-weight:400;color:#f0f0f0;transform:scaleX(0.9657);-webkit-text-stroke:0.5px #000;">28 152</div>
<div class="t" style="left:110.80px;top:104.70px;font-size:12.99px;font-weight:400;color:#dddddd;transform:scaleX(1.0465);">/ 30 817.5885 pli</div>
<div class="t" style="left:496.00px;top:83.77px;font-size:7.12px;font-weight:400;color:#a8a8a8;transform:scaleX(0.9990);">OEE</div>
<div class="t" style="left:461.00px;top:93.66px;font-size:27.09px;font-weight:400;color:#2ecc71;transform:scaleX(0.9225);-webkit-text-stroke:0.5px #000;">91%</div>
<div class="t" style="left:21.50px;top:123.32px;font-size:8.24px;font-weight:400;color:#a8a8a8;transform:scaleX(0.9282);">CURRENT BATCH</div>
<div class="t" style="left:21.70px;top:137.18px;font-size:13.97px;font-weight:400;color:#e6e6e6;transform:scaleX(0.9068);">SPL0-170440/220-SEY</div>
<div class="t" style="left:167.50px;top:137.18px;font-size:13.97px;font-weight:400;color:#e6e6e6;transform:scaleX(0.9343);">SF PLI NON COUSU 2x17*44 + 1x17*2...</div>
<div class="t" style="left:428.50px;top:137.80px;font-size:12.99px;font-weight:400;color:#e6e6e6;transform:scaleX(1.0300);">127h 14m</div>
<div class="t" style="left:340.50px;top:156.68px;font-size:13.97px;font-weight:400;color:#e0e0e0;transform:scaleX(0.9462);"><span style="color:#2ebd5f">354 533</span> <span style="color:#e0861c">(1 187)</span> / 840 000 Pli</div>
<div class="t" style="left:34.70px;top:180.01px;font-size:13.69px;font-weight:700;color:#eeeeee;transform:scaleX(0.8231);-webkit-text-stroke:0.35px #000;">Previous</div>
<div class="t" style="left:21.70px;top:207.23px;font-size:13.55px;font-weight:400;color:#e0e0e0;transform:scaleX(0.9351);">SPL0-170440/220-SEY</div>
<div class="t" style="left:164.20px;top:207.23px;font-size:13.55px;font-weight:400;color:#e0e0e0;transform:scaleX(0.9520);">SF PLI NON COUSU 2x17*44 + 1x...</div>
<div class="t" style="left:384.90px;top:208.18px;font-size:13.97px;font-weight:400;color:#e0e0e0;transform:scaleX(0.8242);"><span style="color:#e5d21a">81 252 (250)</span> / 80 000 Pli</div>
<div class="t" style="left:640.50px;top:47.56px;font-size:7.96px;font-weight:400;color:#a8a8a8;transform:scaleX(1.0224);">SHIFT</div>
<div class="t" style="left:640.50px;top:58.64px;font-size:14.25px;font-weight:700;color:#eeeeee;transform:scaleX(0.9227);-webkit-text-stroke:0.35px #000;">Thursday 22.08 - 1st (12h)</div>
<div class="t" style="left:833.80px;top:61.80px;font-size:9.22px;font-weight:700;color:#eefaf0;transform:scaleX(0.8093);letter-spacing:0.9px;">LIVE</div>
<div class="t" style="left:544.70px;top:95.05px;font-size:13.41px;font-weight:400;color:#9a9a9a;transform:scaleX(0.8147);">SPL0-170220-SEY</div>
<div class="t" style="left:663.00px;top:95.05px;font-size:13.41px;font-weight:400;color:#9a9a9a;transform:scaleX(0.8120);">SPL0-170220-SEY</div>
<div class="t" style="left:795.00px;top:95.05px;font-size:13.41px;font-weight:700;color:#ffffff;transform:scaleX(0.7417);-webkit-text-stroke:0.35px #000;">OEE</div>
<div class="t" style="left:863.00px;top:95.25px;font-size:13.41px;font-weight:400;color:#9a9a9a;transform:scaleX(0.8461);">Speed</div>
<div class="t" style="left:603.00px;top:120.40px;font-size:12.29px;font-weight:400;color:#2ebd5f;transform:scaleX(0.9647);">Availability 99.40218%</div>
<div class="t" style="left:736.30px;top:120.40px;font-size:12.29px;font-weight:400;color:#e5d600;transform:scaleX(0.9597);">Performance 91.89984%</div>
<div class="t" style="left:880.30px;top:120.40px;font-size:12.29px;font-weight:400;color:#e0861c;transform:scaleX(0.9542);">Quality 100%</div>
<div class="t" style="left:0.00px;top:147.12px;font-size:9.78px;font-weight:400;color:#cccccc;transform:scaleX(1.0000);text-align:right;width:60px;margin-left:-60px;left:568px;transform:none">100%</div>
<div class="t" style="left:0.00px;top:156.92px;font-size:9.78px;font-weight:400;color:#cccccc;transform:scaleX(1.0000);text-align:right;width:60px;margin-left:-60px;left:568px;transform:none">80%</div>
<div class="t" style="left:0.00px;top:166.72px;font-size:9.78px;font-weight:400;color:#cccccc;transform:scaleX(1.0000);text-align:right;width:60px;margin-left:-60px;left:568px;transform:none">60%</div>
<div class="t" style="left:0.00px;top:176.42px;font-size:9.78px;font-weight:400;color:#cccccc;transform:scaleX(1.0000);text-align:right;width:60px;margin-left:-60px;left:568px;transform:none">40%</div>
<div class="t" style="left:0.00px;top:186.22px;font-size:9.78px;font-weight:400;color:#cccccc;transform:scaleX(1.0000);text-align:right;width:60px;margin-left:-60px;left:568px;transform:none">20%</div>
<div class="t" style="left:0.00px;top:196.02px;font-size:9.78px;font-weight:400;color:#cccccc;transform:scaleX(1.0000);text-align:right;width:60px;margin-left:-60px;left:568px;transform:none">0%</div>
<div class="t" style="left:0.00px;top:210.72px;font-size:9.78px;font-weight:400;color:#cccccc;transform:scaleX(1.0000);text-align:center;width:30px;left:588.00px;transform:none;">06</div>
<div class="t" style="left:0.00px;top:210.72px;font-size:9.78px;font-weight:400;color:#cccccc;transform:scaleX(1.0000);text-align:center;width:30px;left:624.45px;transform:none;">07</div>
<div class="t" style="left:0.00px;top:210.72px;font-size:9.78px;font-weight:400;color:#cccccc;transform:scaleX(1.0000);text-align:center;width:30px;left:660.90px;transform:none;">08</div>
<div class="t" style="left:0.00px;top:210.72px;font-size:9.78px;font-weight:400;color:#cccccc;transform:scaleX(1.0000);text-align:center;width:30px;left:697.35px;transform:none;">09</div>
<div class="t" style="left:0.00px;top:210.72px;font-size:9.78px;font-weight:400;color:#cccccc;transform:scaleX(1.0000);text-align:center;width:30px;left:733.80px;transform:none;">10</div>
<div class="t" style="left:0.00px;top:210.72px;font-size:9.78px;font-weight:400;color:#cccccc;transform:scaleX(1.0000);text-align:center;width:30px;left:770.25px;transform:none;">11</div>
<div class="t" style="left:0.00px;top:210.72px;font-size:9.78px;font-weight:400;color:#cccccc;transform:scaleX(1.0000);text-align:center;width:30px;left:806.70px;transform:none;">12</div>
<div class="t" style="left:0.00px;top:210.72px;font-size:9.78px;font-weight:400;color:#cccccc;transform:scaleX(1.0000);text-align:center;width:30px;left:843.15px;transform:none;">13</div>
<div class="t" style="left:0.00px;top:210.72px;font-size:9.78px;font-weight:400;color:#cccccc;transform:scaleX(1.0000);text-align:center;width:30px;left:879.60px;transform:none;">14</div>
<div class="t" style="left:0.00px;top:210.72px;font-size:9.78px;font-weight:400;color:#cccccc;transform:scaleX(1.0000);text-align:center;width:30px;left:916.05px;transform:none;">15</div>
<div class="t" style="left:0.00px;top:210.72px;font-size:9.78px;font-weight:400;color:#cccccc;transform:scaleX(1.0000);text-align:center;width:30px;left:952.50px;transform:none;">16</div>
<div class="t" style="left:0.00px;top:210.72px;font-size:9.78px;font-weight:400;color:#cccccc;transform:scaleX(1.0000);left:997.65px;width:5.3px;overflow:hidden;transform:none;">17</div>
<div class="t" style="left:1078.60px;top:81.55px;font-size:34.08px;font-weight:400;color:#eeeeee;transform:scaleX(0.9172);-webkit-text-stroke:0.6px #000;">14:11</div>
<div class="t" style="left:1161.00px;top:82.26px;font-size:12.57px;font-weight:400;color:#999999;transform:scaleX(0.9732);">:56</div>
<div class="t" style="left:558.40px;top:16.49px;font-size:11.59px;font-weight:700;color:#cfcfcf;transform:scaleX(0.9151);">app.evocon.com</div>
<div class="t" style="left:0.00px;top:240.90px;font-size:12.99px;font-weight:400;color:#dddddd;transform:scaleX(1.0000);text-align:center;width:40px;left:292.25px;transform:none">:15</div>
<div class="t" style="left:0.00px;top:240.90px;font-size:12.99px;font-weight:400;color:#dddddd;transform:scaleX(1.0000);text-align:center;width:40px;left:547.00px;transform:none">:30</div>
<div class="t" style="left:0.00px;top:240.90px;font-size:12.99px;font-weight:400;color:#dddddd;transform:scaleX(1.0000);text-align:center;width:40px;left:801.75px;transform:none">:45</div>
<div class="t" style="left:0.00px;top:268.63px;font-size:15.08px;font-weight:400;color:#a0a0a0;transform:scaleX(1.0000);text-align:center;width:49px;left:8px;transform:none">06</div>
<div class="t" style="left:0.00px;top:308.08px;font-size:15.08px;font-weight:400;color:#a0a0a0;transform:scaleX(1.0000);text-align:center;width:49px;left:8px;transform:none">07</div>
<div class="t" style="left:0.00px;top:347.53px;font-size:15.08px;font-weight:400;color:#a0a0a0;transform:scaleX(1.0000);text-align:center;width:49px;left:8px;transform:none">08</div>
<div class="t" style="left:0.00px;top:386.98px;font-size:15.08px;font-weight:400;color:#a0a0a0;transform:scaleX(1.0000);text-align:center;width:49px;left:8px;transform:none">09</div>
<div class="t" style="left:0.00px;top:426.43px;font-size:15.08px;font-weight:400;color:#a0a0a0;transform:scaleX(1.0000);text-align:center;width:49px;left:8px;transform:none">10</div>
<div class="t" style="left:0.00px;top:465.88px;font-size:15.08px;font-weight:400;color:#a0a0a0;transform:scaleX(1.0000);text-align:center;width:49px;left:8px;transform:none">11</div>
<div class="t" style="left:0.00px;top:505.33px;font-size:15.08px;font-weight:400;color:#a0a0a0;transform:scaleX(1.0000);text-align:center;width:49px;left:8px;transform:none">12</div>
<div class="t" style="left:0.00px;top:544.78px;font-size:15.08px;font-weight:400;color:#a0a0a0;transform:scaleX(1.0000);text-align:center;width:49px;left:8px;transform:none">13</div>
<div class="t" style="left:0.00px;top:584.23px;font-size:15.08px;font-weight:400;color:#a0a0a0;transform:scaleX(1.0000);text-align:center;width:49px;left:8px;transform:none">14</div>
<div class="t" style="left:0.00px;top:623.68px;font-size:15.08px;font-weight:400;color:#a0a0a0;transform:scaleX(1.0000);text-align:center;width:49px;left:8px;transform:none">15</div>
<div class="t" style="left:0.00px;top:663.13px;font-size:15.08px;font-weight:400;color:#a0a0a0;transform:scaleX(1.0000);text-align:center;width:49px;left:8px;transform:none">16</div>
<div class="t" style="left:0.00px;top:702.58px;font-size:15.08px;font-weight:400;color:#a0a0a0;transform:scaleX(1.0000);text-align:center;width:49px;left:8px;transform:none">17</div>
<div class="t" style="left:1095.20px;top:270.50px;font-size:12.29px;font-weight:400;color:#e8e8e8;transform:scaleX(0.9603);"><span style="color:#22a022">2 840</span>/3 208.89</div>
<div class="t" style="left:1099.00px;top:308.92px;font-size:14.39px;font-weight:400;color:#e8e8e8;transform:scaleX(0.9374);"><span style="color:#22a022">3 768</span>/4 000</div>
<div class="t" style="left:1095.20px;top:349.40px;font-size:12.29px;font-weight:400;color:#e8e8e8;transform:scaleX(0.9603);"><span style="color:#22a022">3 388</span>/3 675.56</div>
<div class="t" style="left:1099.00px;top:387.82px;font-size:14.39px;font-weight:400;color:#e8e8e8;transform:scaleX(0.9374);"><span style="color:#22a022">3 596</span>/4 000</div>
<div class="t" style="left:1095.20px;top:428.30px;font-size:12.29px;font-weight:400;color:#e8e8e8;transform:scaleX(0.9603);"><span style="color:#22a022">3 328</span>/3 608.89</div>
<div class="t" style="left:1099.00px;top:466.72px;font-size:14.39px;font-weight:400;color:#e8e8e8;transform:scaleX(0.9374);"><span style="color:#22a022">3 830</span>/4 000</div>
<div class="t" style="left:1099.00px;top:506.17px;font-size:14.39px;font-weight:400;color:#e8e8e8;transform:scaleX(0.9374);"><span style="color:#22a022">3 780</span>/4 000</div>
<div class="t" style="left:1095.20px;top:546.65px;font-size:12.29px;font-weight:400;color:#e8e8e8;transform:scaleX(0.9603);"><span style="color:#22a022">2 922</span>/3 533.33</div>
<div class="t" style="left:1097.00px;top:586.10px;font-size:12.29px;font-weight:400;color:#e8e8e8;transform:scaleX(1.0979);"><span style="color:#22a022">700</span>/790.907</div>
<div class="t" style="left:1123.00px;top:624.52px;font-size:14.39px;font-weight:400;color:#e8e8e8;transform:scaleX(1.1500);"><span style="color:#c62828">0</span>/0</div>
<div class="t" style="left:1123.00px;top:663.97px;font-size:14.39px;font-weight:400;color:#e8e8e8;transform:scaleX(1.1500);"><span style="color:#c62828">0</span>/0</div>
<div class="t" style="left:1123.00px;top:703.42px;font-size:14.39px;font-weight:400;color:#e8e8e8;transform:scaleX(1.1500);"><span style="color:#c62828">0</span>/0</div>
<div class="t" style="left:70.00px;top:268.71px;font-size:13.69px;font-weight:400;color:#cfcfcf;transform:scaleX(0.9538);">Jours fériés ...</div>
<div class="t" style="left:563.70px;top:269.01px;font-size:13.69px;font-weight:400;color:#c8c8c8;transform:scaleX(1.0231);overflow:hidden;">Changemen</div>
<div class="t" style="left:750.40px;top:348.41px;font-size:12.15px;font-weight:400;color:#c0c0c0;transform:scaleX(1.0559);">Change...</div>
<div class="t" style="left:920.00px;top:426.21px;font-size:13.69px;font-weight:400;color:#c8c8c8;transform:scaleX(1.0191);">Changemen</div>
<div class="t" style="left:71.00px;top:544.71px;font-size:13.69px;font-weight:400;color:#cfcfcf;transform:scaleX(1.0164);">Changement d..</div>
<div class="t" style="left:190.50px;top:543.71px;font-size:13.69px;font-weight:400;color:#dddddd;transform:scaleX(0.8517);">B...</div>
<div class="t" style="left:95.00px;top:433.78px;font-size:9.36px;font-weight:700;color:#c8c8c8;transform:scaleX(0.8048);letter-spacing:0.5px;">SUCCESSFUL</div>
<div class="t" style="left:83.75px;top:449.36px;font-size:12.57px;font-weight:700;color:#eeeeee;transform:scaleX(0.9190);-webkit-text-stroke:0.35px #000;">Déclaration N° &amp; Poids de Bobine</div>
<div class="t" style="left:83.75px;top:466.32px;font-size:9.78px;font-weight:400;color:#e2e2e2;transform:scaleX(1.0000);transform:none;"><span style="font-size:8.7px;letter-spacing:0.2px;color:#bdbdbd">DUE:</span> 13:07</div>
<div class="t" style="left:83.75px;top:479.52px;font-size:9.78px;font-weight:400;color:#e2e2e2;transform:scaleX(1.0000);transform:none;"><span style="font-size:8.7px;letter-spacing:0.2px;color:#bdbdbd">DONE:</span> 13:25</div>
<div class="t" style="left:83.75px;top:492.72px;font-size:9.78px;font-weight:400;color:#e2e2e2;transform:scaleX(1.0000);transform:none;"><span style="font-size:8.7px;letter-spacing:0.2px;color:#bdbdbd">N° DE LOT BOBINE:</span> Yes</div>
<div class="t" style="left:83.75px;top:505.92px;font-size:9.78px;font-weight:400;color:#e2e2e2;transform:scaleX(1.0000);transform:none;"><span style="font-size:8.7px;letter-spacing:0.2px;color:#bdbdbd">POIDS DE LA BOBINE:</span> Yes</div>
<div class="t" style="left:87.00px;top:744.12px;font-size:12.85px;font-weight:400;color:#dddddd;transform:scaleX(0.9220);">Youssef Achik</div>
<div class="t" style="left:287.70px;top:744.12px;font-size:12.85px;font-weight:400;color:#dddddd;transform:scaleX(0.9333);">Product changeover</div>
<div class="t" style="left:522.70px;top:744.12px;font-size:12.85px;font-weight:400;color:#dddddd;transform:scaleX(0.9631);">Downtime</div>
<div class="t" style="left:695.70px;top:744.12px;font-size:12.85px;font-weight:400;color:#dddddd;transform:scaleX(0.8905);">Speed loss</div>
<div class="t" style="left:892.70px;top:744.12px;font-size:12.85px;font-weight:400;color:#dddddd;transform:scaleX(0.8939);">Scrap</div>
<div class="t" style="left:1050.50px;top:744.12px;font-size:12.85px;font-weight:400;color:#dddddd;transform:scaleX(0.9021);">Checklists</div>
<div class="t" style="left:766.50px;top:745.72px;font-size:9.78px;font-weight:400;color:#222222;transform:scaleX(1.2874);">1</div>
<svg class="abs" style="left:0;top:0" width="1200" height="778" viewBox="0 0 1200 778">
<path d="M337.7 610.5 L234 507.5" stroke="#f6481a" stroke-width="4.2" stroke-linecap="butt"/>
<path d="M222.5 497.5 L245.9 505.2 L230.6 520.5 Z" fill="#f6481a"/>
<path d="M183.3 670.8 L138 725" stroke="#f6481a" stroke-width="4.2"/>
<path d="M127 737.5 L132.5 714.2 L150 727.5 Z" fill="#f6481a"/>
</svg>
</body></html>
